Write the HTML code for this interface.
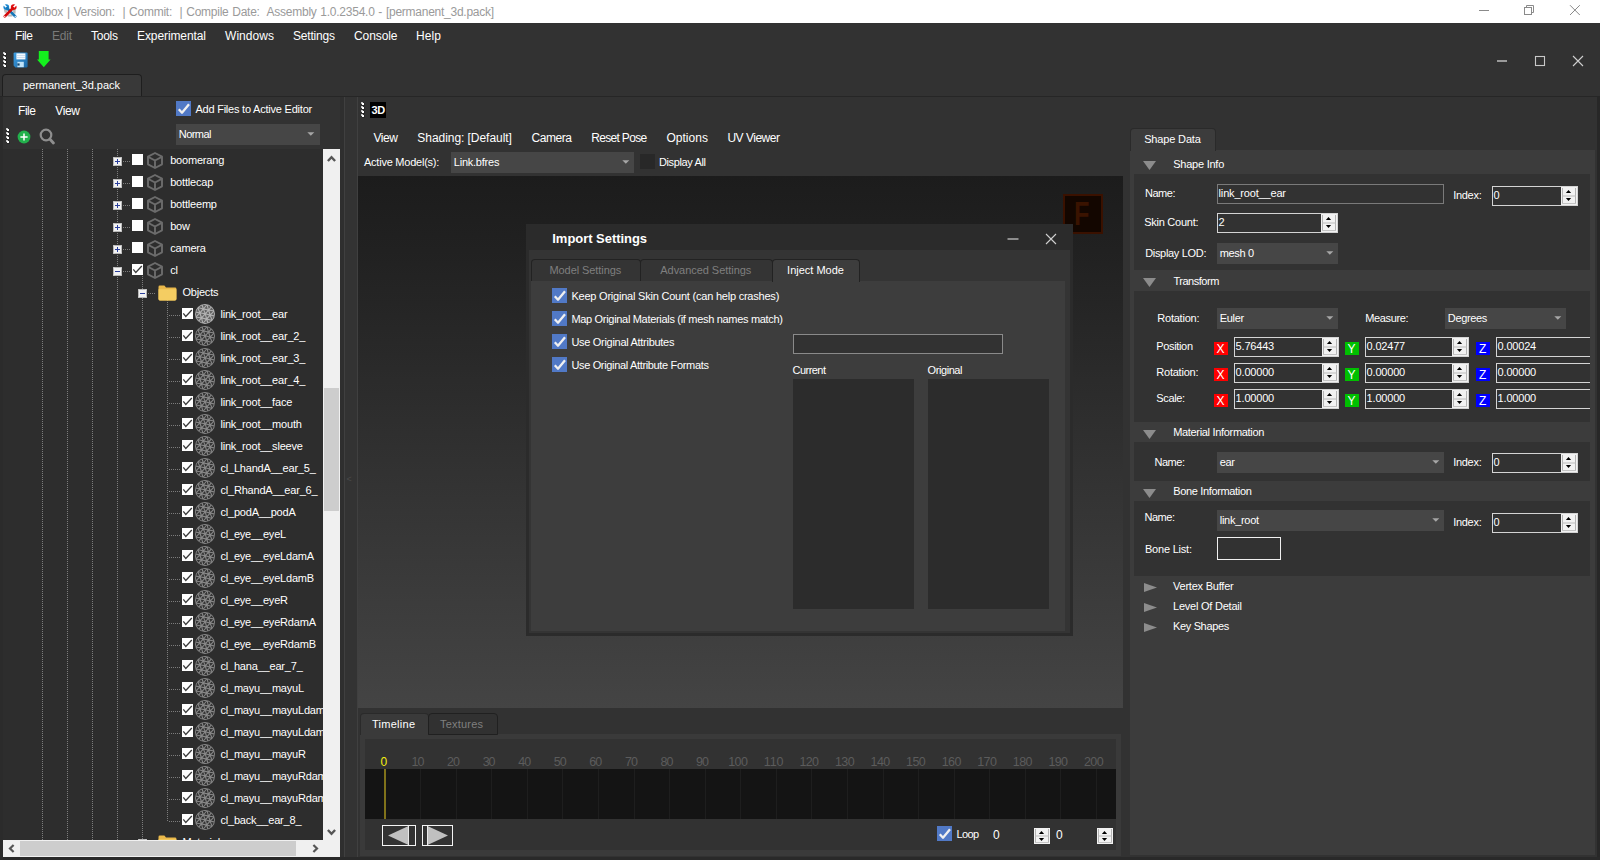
<!DOCTYPE html>
<html lang="en"><head><meta charset="utf-8"><title>Toolbox</title>
<style>
html,body{margin:0;padding:0;background:#2b2b2b;}
body{width:1600px;height:860px;overflow:hidden;font-family:"Liberation Sans",sans-serif;font-size:11px;color:#fff;}
#app{position:relative;width:1600px;height:860px;overflow:hidden;background:#2b2b2b;}
#app div,#app span.t,#app svg{position:absolute;box-sizing:border-box;}
.t{white-space:pre;line-height:16px;}

</style></head>
<body>
<div id="app">
<div id="titlebar" style="left:0;top:0;width:0;height:0;">
<div style="left:0px;top:0px;width:1600px;height:23px;background:#ffffff;"></div>
<svg width="16" height="16" viewBox="-1 -1 16 16" style="left:2px;top:3px"><path d="M0.8 5.6 H4.2 V8.8 H1.6 Z M9.8 5.4 H12.6 V9.4 H10.4 Z M4.2 10.4 H9.4 V12.4 H4.8 Z" fill="#b8b8b8"/><circle cx="3.3" cy="3.1" r="2.9" fill="#1b86cf"/><path d="M3.97 2.63 L2.83 3.77 L-1.4 -0.4 L0 -1.6 Z" fill="#ffffff"/><path d="M4.2 4.2 L12.2 12.4" stroke="#1577b8" stroke-width="2.7" stroke-linecap="round"/><circle cx="12.3" cy="12.4" r="0.7" fill="#d8ecf8"/><circle cx="10.7" cy="3.1" r="2.9" fill="#e01010"/><path d="M10.03 2.63 L11.17 3.77 L15.4 -0.4 L14 -1.6 Z" fill="#ffffff"/><path d="M9.8 4.2 L1.8 12.4" stroke="#d40a0a" stroke-width="2.7" stroke-linecap="round"/><circle cx="1.7" cy="12.4" r="0.7" fill="#f8d8d8"/></svg>
<svg width="120" height="23" viewBox="0 0 120 23" style="left:1475px;top:0px"><path d="M4 10.5 H14" stroke="#8a8a8a" stroke-width="1"/><rect x="49.5" y="7.5" width="7" height="7" fill="none" stroke="#8a8a8a"/><path d="M51.5 7.5 V5.5 H58.5 V12.5 H56.5" fill="none" stroke="#8a8a8a"/><path d="M95 5.2 L104.8 15 M104.8 5.2 L95 15" stroke="#8a8a8a" stroke-width="1"/></svg>
<span class="t" style="left:23.50px;top:3.64px;font-size:12px;color:#9a9a9a;letter-spacing:-0.252px;word-spacing:0.703px;">Toolbox | Version:  | Commit:  | Compile Date:  Assembly 1.0.2354.0 - [permanent_3d.pack]</span>
</div>
<div id="menubar" style="left:0;top:0;width:0;height:0;">
<div style="left:0px;top:23px;width:1600px;height:73px;background:#323232;"></div>
<div style="left:4px;top:53px;width:3px;height:3px;background:#272727;"></div>
<div style="left:3px;top:52px;width:2px;height:2px;background:#c4c4c4;"></div>
<div style="left:4px;top:53px;width:2px;height:2px;background:#ffffff;"></div>
<div style="left:4px;top:57px;width:3px;height:3px;background:#272727;"></div>
<div style="left:3px;top:56px;width:2px;height:2px;background:#c4c4c4;"></div>
<div style="left:4px;top:57px;width:2px;height:2px;background:#ffffff;"></div>
<div style="left:4px;top:61px;width:3px;height:3px;background:#272727;"></div>
<div style="left:3px;top:60px;width:2px;height:2px;background:#c4c4c4;"></div>
<div style="left:4px;top:61px;width:2px;height:2px;background:#ffffff;"></div>
<div style="left:4px;top:65px;width:3px;height:3px;background:#272727;"></div>
<div style="left:3px;top:64px;width:2px;height:2px;background:#c4c4c4;"></div>
<div style="left:4px;top:65px;width:2px;height:2px;background:#ffffff;"></div>
<svg width="15" height="16" viewBox="0 0 15 16" style="left:12.5px;top:51.5px"><defs><linearGradient id="sv" x1="0" y1="0" x2="1" y2="1"><stop offset="0" stop-color="#3f9fe2"/><stop offset="1" stop-color="#1a66a4"/></linearGradient></defs><path d="M0.6 1.4 Q0.6 0.4 1.6 0.4 H13.6 Q14.6 0.4 14.6 1.4 V14.6 Q14.6 15.4 13.6 15.4 H2.4 L0.6 13.6 Z" fill="url(#sv)"/><rect x="3.4" y="1.4" width="9" height="6" fill="#f4f9fd"/><rect x="3.8" y="3.2" width="8.2" height="0.8" fill="#c4d8ea"/><rect x="3.8" y="5" width="8.2" height="0.8" fill="#c4d8ea"/><rect x="4.4" y="9.8" width="6.4" height="5.4" fill="#bfe2f8"/><rect x="4.4" y="11.4" width="2.2" height="2.2" fill="#14466e"/></svg>
<svg width="14" height="17" viewBox="0 0 14 17" style="left:37px;top:51px"><path d="M1.8 0 H11.6 V8.6 H13.6 L6.8 16.3 L0 8.6 H1.8 Z" fill="#14f01e"/></svg>
<svg width="100" height="20" viewBox="0 0 100 20" style="left:1492px;top:51px"><path d="M5 10 H15" stroke="#9a9a9a" stroke-width="2"/><rect x="43.5" y="5.5" width="9" height="9" fill="none" stroke="#c8c8c8" stroke-width="1.1"/><path d="M81 5 L91 15 M91 5 L81 15" stroke="#d0d0d0" stroke-width="1.1"/></svg>
<div style="left:2px;top:74px;width:140px;height:23px;background:#393939;border:1px solid #1e1e1e;border-bottom:none;border-radius:4px 4px 0 0;"></div>
<div style="left:0px;top:96px;width:1600px;height:1px;background:#262626;"></div>
<span class="t" style="left:15.00px;top:27.84px;font-size:12px;color:#fff;letter-spacing:-0.445px;">File</span>
<span class="t" style="left:52.00px;top:27.84px;font-size:12px;color:#7a7a7a;letter-spacing:-0.226px;">Edit</span>
<span class="t" style="left:91.00px;top:27.84px;font-size:12px;color:#fff;letter-spacing:-0.253px;">Tools</span>
<span class="t" style="left:137.00px;top:27.84px;font-size:12px;color:#fff;letter-spacing:-0.094px;">Experimental</span>
<span class="t" style="left:225.00px;top:27.84px;font-size:12px;color:#fff;letter-spacing:0.053px;">Windows</span>
<span class="t" style="left:293.00px;top:27.84px;font-size:12px;color:#fff;letter-spacing:-0.194px;">Settings</span>
<span class="t" style="left:354.00px;top:27.84px;font-size:12px;color:#fff;letter-spacing:-0.088px;">Console</span>
<span class="t" style="left:416.00px;top:27.84px;font-size:12px;color:#fff;letter-spacing:0.107px;">Help</span>
<span class="t" style="left:23.00px;top:77.19px;font-size:11px;color:#fff;letter-spacing:-0.015px;">permanent_3d.pack</span>
</div>
<div id="left-panel" style="left:0;top:0;width:0;height:0;">
<div style="left:3px;top:97px;width:341px;height:760px;background:#323232;"></div>
<div style="left:176px;top:101px;width:15px;height:15px;background:#5179c6;"><svg width="15" height="15" viewBox="0 0 15 15" style="left:0;top:0"><path d="M2.8 8.3 L6 11.7 L13 3.3" fill="none" stroke="#f0f0f0" stroke-width="2.3" stroke-linejoin="round"/></svg></div>
<div style="left:176px;top:124px;width:144px;height:21px;background:#464646;"></div>
<svg width="8" height="4" viewBox="0 0 8 4" style="left:307px;top:132px"><path d="M0.3 0.2 H7.3 L3.8 3.7 Z" fill="#a6a6a6"/></svg>
<div style="left:7px;top:129px;width:3px;height:3px;background:#272727;"></div>
<div style="left:6px;top:128px;width:2px;height:2px;background:#c4c4c4;"></div>
<div style="left:7px;top:129px;width:2px;height:2px;background:#ffffff;"></div>
<div style="left:7px;top:133px;width:3px;height:3px;background:#272727;"></div>
<div style="left:6px;top:132px;width:2px;height:2px;background:#c4c4c4;"></div>
<div style="left:7px;top:133px;width:2px;height:2px;background:#ffffff;"></div>
<div style="left:7px;top:137px;width:3px;height:3px;background:#272727;"></div>
<div style="left:6px;top:136px;width:2px;height:2px;background:#c4c4c4;"></div>
<div style="left:7px;top:137px;width:2px;height:2px;background:#ffffff;"></div>
<div style="left:7px;top:141px;width:3px;height:3px;background:#272727;"></div>
<div style="left:6px;top:140px;width:2px;height:2px;background:#c4c4c4;"></div>
<div style="left:7px;top:141px;width:2px;height:2px;background:#ffffff;"></div>
<svg width="14" height="14" viewBox="0 0 14 14" style="left:17px;top:129.5px"><circle cx="7" cy="7" r="6.4" fill="#22b14c"/><path d="M7 3.4 V10.6 M3.4 7 H10.6" stroke="#fff" stroke-width="1.5"/></svg>
<svg width="16" height="17" viewBox="0 0 16 17" style="left:38.5px;top:127.5px"><circle cx="7" cy="7" r="5.3" fill="none" stroke="#8e8e8e" stroke-width="2.2"/><path d="M11 11.2 L14.4 15" stroke="#8e8e8e" stroke-width="2.8" stroke-linecap="round"/></svg>
<div style="left:3px;top:149px;width:320px;height:691px;background:#2d2d2d;overflow:hidden;"><div style="left:39px;top:0px;width:1px;height:691px;background:repeating-linear-gradient(to bottom,#7d7d7d 0,#7d7d7d 1px,transparent 1px,transparent 2px);"></div><div style="left:64px;top:0px;width:1px;height:691px;background:repeating-linear-gradient(to bottom,#7d7d7d 0,#7d7d7d 1px,transparent 1px,transparent 2px);"></div><div style="left:89px;top:0px;width:1px;height:691px;background:repeating-linear-gradient(to bottom,#7d7d7d 0,#7d7d7d 1px,transparent 1px,transparent 2px);"></div><div style="left:114px;top:0px;width:1px;height:691px;background:repeating-linear-gradient(to bottom,#7d7d7d 0,#7d7d7d 1px,transparent 1px,transparent 2px);"></div><div style="left:139px;top:127px;width:1px;height:564px;background:repeating-linear-gradient(to bottom,#7d7d7d 0,#7d7d7d 1px,transparent 1px,transparent 2px);"></div><div style="left:164px;top:149px;width:1px;height:523px;background:repeating-linear-gradient(to bottom,#7d7d7d 0,#7d7d7d 1px,transparent 1px,transparent 2px);"></div><div style="left:120px;top:12px;width:8px;height:1px;background:repeating-linear-gradient(to right,#7d7d7d 0,#7d7d7d 1px,transparent 1px,transparent 2px);"></div><svg width="9" height="9" viewBox="0 0 9 9" style="left:110px;top:8px"><rect x="0" y="0" width="9" height="9" rx="1" fill="#f2f2f2"/><rect x="0.5" y="0.5" width="8" height="8" rx="1" fill="none" stroke="#b8b8b8"/><path d="M2 4.5 H7" stroke="#2b3f9c" stroke-width="1"/><path d="M4.5 2 V7" stroke="#2b3f9c" stroke-width="1"/></svg><div style="left:129px;top:5px;width:11px;height:11px;background:#ffffff;"></div><svg width="16" height="17" viewBox="0 0 16 17" style="left:144px;top:3px"><path d="M8 1 L15 4.7 V12.3 L8 16 L1 12.3 V4.7 Z" fill="none" stroke="#6c6c6c" stroke-width="1.9" stroke-linejoin="round"/><path d="M1.2 4.9 L8 8.5 L14.8 4.9 M8 8.5 V15.8" fill="none" stroke="#6c6c6c" stroke-width="1.9"/></svg><div style="left:120px;top:34px;width:8px;height:1px;background:repeating-linear-gradient(to right,#7d7d7d 0,#7d7d7d 1px,transparent 1px,transparent 2px);"></div><svg width="9" height="9" viewBox="0 0 9 9" style="left:110px;top:30px"><rect x="0" y="0" width="9" height="9" rx="1" fill="#f2f2f2"/><rect x="0.5" y="0.5" width="8" height="8" rx="1" fill="none" stroke="#b8b8b8"/><path d="M2 4.5 H7" stroke="#2b3f9c" stroke-width="1"/><path d="M4.5 2 V7" stroke="#2b3f9c" stroke-width="1"/></svg><div style="left:129px;top:27px;width:11px;height:11px;background:#ffffff;"></div><svg width="16" height="17" viewBox="0 0 16 17" style="left:144px;top:25px"><path d="M8 1 L15 4.7 V12.3 L8 16 L1 12.3 V4.7 Z" fill="none" stroke="#6c6c6c" stroke-width="1.9" stroke-linejoin="round"/><path d="M1.2 4.9 L8 8.5 L14.8 4.9 M8 8.5 V15.8" fill="none" stroke="#6c6c6c" stroke-width="1.9"/></svg><div style="left:120px;top:56px;width:8px;height:1px;background:repeating-linear-gradient(to right,#7d7d7d 0,#7d7d7d 1px,transparent 1px,transparent 2px);"></div><svg width="9" height="9" viewBox="0 0 9 9" style="left:110px;top:52px"><rect x="0" y="0" width="9" height="9" rx="1" fill="#f2f2f2"/><rect x="0.5" y="0.5" width="8" height="8" rx="1" fill="none" stroke="#b8b8b8"/><path d="M2 4.5 H7" stroke="#2b3f9c" stroke-width="1"/><path d="M4.5 2 V7" stroke="#2b3f9c" stroke-width="1"/></svg><div style="left:129px;top:49px;width:11px;height:11px;background:#ffffff;"></div><svg width="16" height="17" viewBox="0 0 16 17" style="left:144px;top:47px"><path d="M8 1 L15 4.7 V12.3 L8 16 L1 12.3 V4.7 Z" fill="none" stroke="#6c6c6c" stroke-width="1.9" stroke-linejoin="round"/><path d="M1.2 4.9 L8 8.5 L14.8 4.9 M8 8.5 V15.8" fill="none" stroke="#6c6c6c" stroke-width="1.9"/></svg><div style="left:120px;top:78px;width:8px;height:1px;background:repeating-linear-gradient(to right,#7d7d7d 0,#7d7d7d 1px,transparent 1px,transparent 2px);"></div><svg width="9" height="9" viewBox="0 0 9 9" style="left:110px;top:74px"><rect x="0" y="0" width="9" height="9" rx="1" fill="#f2f2f2"/><rect x="0.5" y="0.5" width="8" height="8" rx="1" fill="none" stroke="#b8b8b8"/><path d="M2 4.5 H7" stroke="#2b3f9c" stroke-width="1"/><path d="M4.5 2 V7" stroke="#2b3f9c" stroke-width="1"/></svg><div style="left:129px;top:71px;width:11px;height:11px;background:#ffffff;"></div><svg width="16" height="17" viewBox="0 0 16 17" style="left:144px;top:69px"><path d="M8 1 L15 4.7 V12.3 L8 16 L1 12.3 V4.7 Z" fill="none" stroke="#6c6c6c" stroke-width="1.9" stroke-linejoin="round"/><path d="M1.2 4.9 L8 8.5 L14.8 4.9 M8 8.5 V15.8" fill="none" stroke="#6c6c6c" stroke-width="1.9"/></svg><div style="left:120px;top:100px;width:8px;height:1px;background:repeating-linear-gradient(to right,#7d7d7d 0,#7d7d7d 1px,transparent 1px,transparent 2px);"></div><svg width="9" height="9" viewBox="0 0 9 9" style="left:110px;top:96px"><rect x="0" y="0" width="9" height="9" rx="1" fill="#f2f2f2"/><rect x="0.5" y="0.5" width="8" height="8" rx="1" fill="none" stroke="#b8b8b8"/><path d="M2 4.5 H7" stroke="#2b3f9c" stroke-width="1"/><path d="M4.5 2 V7" stroke="#2b3f9c" stroke-width="1"/></svg><div style="left:129px;top:93px;width:11px;height:11px;background:#ffffff;"></div><svg width="16" height="17" viewBox="0 0 16 17" style="left:144px;top:91px"><path d="M8 1 L15 4.7 V12.3 L8 16 L1 12.3 V4.7 Z" fill="none" stroke="#6c6c6c" stroke-width="1.9" stroke-linejoin="round"/><path d="M1.2 4.9 L8 8.5 L14.8 4.9 M8 8.5 V15.8" fill="none" stroke="#6c6c6c" stroke-width="1.9"/></svg><div style="left:120px;top:122px;width:8px;height:1px;background:repeating-linear-gradient(to right,#7d7d7d 0,#7d7d7d 1px,transparent 1px,transparent 2px);"></div><svg width="9" height="9" viewBox="0 0 9 9" style="left:110px;top:118px"><rect x="0" y="0" width="9" height="9" rx="1" fill="#f2f2f2"/><rect x="0.5" y="0.5" width="8" height="8" rx="1" fill="none" stroke="#b8b8b8"/><path d="M2 4.5 H7" stroke="#2b3f9c" stroke-width="1"/></svg><div style="left:129px;top:115px;width:11px;height:11px;background:#ffffff;"><svg width="11" height="11" viewBox="0 0 11 11" style="left:0;top:0"><path d="M1.3 5.4 L3.8 8.4 L9.8 2" fill="none" stroke="#3a3a3a" stroke-width="1.3"/></svg></div><svg width="16" height="17" viewBox="0 0 16 17" style="left:144px;top:113px"><path d="M8 1 L15 4.7 V12.3 L8 16 L1 12.3 V4.7 Z" fill="none" stroke="#6c6c6c" stroke-width="1.9" stroke-linejoin="round"/><path d="M1.2 4.9 L8 8.5 L14.8 4.9 M8 8.5 V15.8" fill="none" stroke="#6c6c6c" stroke-width="1.9"/></svg><div style="left:145px;top:144px;width:8px;height:1px;background:repeating-linear-gradient(to right,#7d7d7d 0,#7d7d7d 1px,transparent 1px,transparent 2px);"></div><svg width="9" height="9" viewBox="0 0 9 9" style="left:135px;top:140px"><rect x="0" y="0" width="9" height="9" rx="1" fill="#f2f2f2"/><rect x="0.5" y="0.5" width="8" height="8" rx="1" fill="none" stroke="#b8b8b8"/><path d="M2 4.5 H7" stroke="#2b3f9c" stroke-width="1"/></svg><svg width="19" height="16" viewBox="0 0 19 16" style="left:155px;top:135.5px"><path d="M0.5 2 Q0.5 0.6 1.8 0.6 H6.4 L8 2.4 H17 Q18.4 2.4 18.4 3.8 V14 Q18.4 15.4 17 15.4 H1.9 Q0.5 15.4 0.5 14 Z" fill="#e9b84a"/><path d="M0.5 4.2 H18.4 V14 Q18.4 15.4 17 15.4 H1.9 Q0.5 15.4 0.5 14 Z" fill="#f4cd62"/></svg><div style="left:166px;top:166px;width:12px;height:1px;background:repeating-linear-gradient(to right,#7d7d7d 0,#7d7d7d 1px,transparent 1px,transparent 2px);"></div><div style="left:179px;top:159px;width:11px;height:11px;background:#ffffff;"><svg width="11" height="11" viewBox="0 0 11 11" style="left:0;top:0"><path d="M1.3 5.4 L3.8 8.4 L9.8 2" fill="none" stroke="#3a3a3a" stroke-width="1.3"/></svg></div><svg width="20" height="20" viewBox="0 0 20 20" style="left:192px;top:155px"><circle cx="10" cy="10" r="10" fill="#b2b2b2"/><path d="M11.03 10.57 L14.09 11.39 L11.87 13.86 Z M15.91 11.86 L18.85 12.49 L17.36 15.41 Z M14.94 12.21 L12.71 14.68 L16.39 15.76 Z M12.47 15.68 L16.15 16.76 L13.40 18.54 Z M10.00 10.91 L10.84 14.20 L7.58 13.51 Z M11.34 16.05 L12.27 18.91 L9.00 19.08 Z M10.56 15.38 L7.30 14.69 L8.21 18.42 Z M6.31 14.98 L7.22 18.71 L4.30 17.22 Z M9.20 10.18 L6.78 12.78 L5.75 9.62 Z M5.43 14.19 L3.42 16.42 L1.63 13.67 Z M5.62 13.17 L4.59 10.01 L1.82 12.66 Z M3.84 9.30 L1.07 11.95 L0.90 8.67 Z M9.42 9.12 L5.98 8.56 L8.20 6.09 Z M4.09 8.14 L1.15 7.51 L2.64 4.59 Z M5.06 7.79 L7.29 5.32 L3.61 4.24 Z M7.53 4.32 L3.85 3.24 L6.60 1.46 Z M10.45 8.79 L9.23 5.75 L12.49 6.45 Z M8.66 3.95 L7.73 1.09 L11.00 0.92 Z M9.44 4.62 L12.70 5.31 L11.79 1.58 Z M13.69 5.02 L12.78 1.29 L15.70 2.78 Z M11.26 9.51 L13.29 7.17 L14.32 10.33 Z M14.57 5.81 L16.58 3.58 L18.37 6.33 Z M14.38 6.83 L15.41 9.99 L18.18 7.34 Z M16.16 10.70 L18.93 8.05 L19.10 11.33 Z" fill="#2d2d2d" opacity="0.6"/></svg><div style="left:166px;top:188px;width:12px;height:1px;background:repeating-linear-gradient(to right,#7d7d7d 0,#7d7d7d 1px,transparent 1px,transparent 2px);"></div><div style="left:179px;top:181px;width:11px;height:11px;background:#ffffff;"><svg width="11" height="11" viewBox="0 0 11 11" style="left:0;top:0"><path d="M1.3 5.4 L3.8 8.4 L9.8 2" fill="none" stroke="#3a3a3a" stroke-width="1.3"/></svg></div><svg width="20" height="20" viewBox="0 0 20 20" style="left:192px;top:177px"><circle cx="10" cy="10" r="10" fill="#888888"/><path d="M11.03 10.57 L14.09 11.39 L11.87 13.86 Z M15.91 11.86 L18.85 12.49 L17.36 15.41 Z M14.94 12.21 L12.71 14.68 L16.39 15.76 Z M12.47 15.68 L16.15 16.76 L13.40 18.54 Z M10.00 10.91 L10.84 14.20 L7.58 13.51 Z M11.34 16.05 L12.27 18.91 L9.00 19.08 Z M10.56 15.38 L7.30 14.69 L8.21 18.42 Z M6.31 14.98 L7.22 18.71 L4.30 17.22 Z M9.20 10.18 L6.78 12.78 L5.75 9.62 Z M5.43 14.19 L3.42 16.42 L1.63 13.67 Z M5.62 13.17 L4.59 10.01 L1.82 12.66 Z M3.84 9.30 L1.07 11.95 L0.90 8.67 Z M9.42 9.12 L5.98 8.56 L8.20 6.09 Z M4.09 8.14 L1.15 7.51 L2.64 4.59 Z M5.06 7.79 L7.29 5.32 L3.61 4.24 Z M7.53 4.32 L3.85 3.24 L6.60 1.46 Z M10.45 8.79 L9.23 5.75 L12.49 6.45 Z M8.66 3.95 L7.73 1.09 L11.00 0.92 Z M9.44 4.62 L12.70 5.31 L11.79 1.58 Z M13.69 5.02 L12.78 1.29 L15.70 2.78 Z M11.26 9.51 L13.29 7.17 L14.32 10.33 Z M14.57 5.81 L16.58 3.58 L18.37 6.33 Z M14.38 6.83 L15.41 9.99 L18.18 7.34 Z M16.16 10.70 L18.93 8.05 L19.10 11.33 Z" fill="#2d2d2d" opacity="0.92"/></svg><div style="left:166px;top:210px;width:12px;height:1px;background:repeating-linear-gradient(to right,#7d7d7d 0,#7d7d7d 1px,transparent 1px,transparent 2px);"></div><div style="left:179px;top:203px;width:11px;height:11px;background:#ffffff;"><svg width="11" height="11" viewBox="0 0 11 11" style="left:0;top:0"><path d="M1.3 5.4 L3.8 8.4 L9.8 2" fill="none" stroke="#3a3a3a" stroke-width="1.3"/></svg></div><svg width="20" height="20" viewBox="0 0 20 20" style="left:192px;top:199px"><circle cx="10" cy="10" r="10" fill="#888888"/><path d="M11.03 10.57 L14.09 11.39 L11.87 13.86 Z M15.91 11.86 L18.85 12.49 L17.36 15.41 Z M14.94 12.21 L12.71 14.68 L16.39 15.76 Z M12.47 15.68 L16.15 16.76 L13.40 18.54 Z M10.00 10.91 L10.84 14.20 L7.58 13.51 Z M11.34 16.05 L12.27 18.91 L9.00 19.08 Z M10.56 15.38 L7.30 14.69 L8.21 18.42 Z M6.31 14.98 L7.22 18.71 L4.30 17.22 Z M9.20 10.18 L6.78 12.78 L5.75 9.62 Z M5.43 14.19 L3.42 16.42 L1.63 13.67 Z M5.62 13.17 L4.59 10.01 L1.82 12.66 Z M3.84 9.30 L1.07 11.95 L0.90 8.67 Z M9.42 9.12 L5.98 8.56 L8.20 6.09 Z M4.09 8.14 L1.15 7.51 L2.64 4.59 Z M5.06 7.79 L7.29 5.32 L3.61 4.24 Z M7.53 4.32 L3.85 3.24 L6.60 1.46 Z M10.45 8.79 L9.23 5.75 L12.49 6.45 Z M8.66 3.95 L7.73 1.09 L11.00 0.92 Z M9.44 4.62 L12.70 5.31 L11.79 1.58 Z M13.69 5.02 L12.78 1.29 L15.70 2.78 Z M11.26 9.51 L13.29 7.17 L14.32 10.33 Z M14.57 5.81 L16.58 3.58 L18.37 6.33 Z M14.38 6.83 L15.41 9.99 L18.18 7.34 Z M16.16 10.70 L18.93 8.05 L19.10 11.33 Z" fill="#2d2d2d" opacity="0.92"/></svg><div style="left:166px;top:232px;width:12px;height:1px;background:repeating-linear-gradient(to right,#7d7d7d 0,#7d7d7d 1px,transparent 1px,transparent 2px);"></div><div style="left:179px;top:225px;width:11px;height:11px;background:#ffffff;"><svg width="11" height="11" viewBox="0 0 11 11" style="left:0;top:0"><path d="M1.3 5.4 L3.8 8.4 L9.8 2" fill="none" stroke="#3a3a3a" stroke-width="1.3"/></svg></div><svg width="20" height="20" viewBox="0 0 20 20" style="left:192px;top:221px"><circle cx="10" cy="10" r="10" fill="#888888"/><path d="M11.03 10.57 L14.09 11.39 L11.87 13.86 Z M15.91 11.86 L18.85 12.49 L17.36 15.41 Z M14.94 12.21 L12.71 14.68 L16.39 15.76 Z M12.47 15.68 L16.15 16.76 L13.40 18.54 Z M10.00 10.91 L10.84 14.20 L7.58 13.51 Z M11.34 16.05 L12.27 18.91 L9.00 19.08 Z M10.56 15.38 L7.30 14.69 L8.21 18.42 Z M6.31 14.98 L7.22 18.71 L4.30 17.22 Z M9.20 10.18 L6.78 12.78 L5.75 9.62 Z M5.43 14.19 L3.42 16.42 L1.63 13.67 Z M5.62 13.17 L4.59 10.01 L1.82 12.66 Z M3.84 9.30 L1.07 11.95 L0.90 8.67 Z M9.42 9.12 L5.98 8.56 L8.20 6.09 Z M4.09 8.14 L1.15 7.51 L2.64 4.59 Z M5.06 7.79 L7.29 5.32 L3.61 4.24 Z M7.53 4.32 L3.85 3.24 L6.60 1.46 Z M10.45 8.79 L9.23 5.75 L12.49 6.45 Z M8.66 3.95 L7.73 1.09 L11.00 0.92 Z M9.44 4.62 L12.70 5.31 L11.79 1.58 Z M13.69 5.02 L12.78 1.29 L15.70 2.78 Z M11.26 9.51 L13.29 7.17 L14.32 10.33 Z M14.57 5.81 L16.58 3.58 L18.37 6.33 Z M14.38 6.83 L15.41 9.99 L18.18 7.34 Z M16.16 10.70 L18.93 8.05 L19.10 11.33 Z" fill="#2d2d2d" opacity="0.92"/></svg><div style="left:166px;top:254px;width:12px;height:1px;background:repeating-linear-gradient(to right,#7d7d7d 0,#7d7d7d 1px,transparent 1px,transparent 2px);"></div><div style="left:179px;top:247px;width:11px;height:11px;background:#ffffff;"><svg width="11" height="11" viewBox="0 0 11 11" style="left:0;top:0"><path d="M1.3 5.4 L3.8 8.4 L9.8 2" fill="none" stroke="#3a3a3a" stroke-width="1.3"/></svg></div><svg width="20" height="20" viewBox="0 0 20 20" style="left:192px;top:243px"><circle cx="10" cy="10" r="10" fill="#888888"/><path d="M11.03 10.57 L14.09 11.39 L11.87 13.86 Z M15.91 11.86 L18.85 12.49 L17.36 15.41 Z M14.94 12.21 L12.71 14.68 L16.39 15.76 Z M12.47 15.68 L16.15 16.76 L13.40 18.54 Z M10.00 10.91 L10.84 14.20 L7.58 13.51 Z M11.34 16.05 L12.27 18.91 L9.00 19.08 Z M10.56 15.38 L7.30 14.69 L8.21 18.42 Z M6.31 14.98 L7.22 18.71 L4.30 17.22 Z M9.20 10.18 L6.78 12.78 L5.75 9.62 Z M5.43 14.19 L3.42 16.42 L1.63 13.67 Z M5.62 13.17 L4.59 10.01 L1.82 12.66 Z M3.84 9.30 L1.07 11.95 L0.90 8.67 Z M9.42 9.12 L5.98 8.56 L8.20 6.09 Z M4.09 8.14 L1.15 7.51 L2.64 4.59 Z M5.06 7.79 L7.29 5.32 L3.61 4.24 Z M7.53 4.32 L3.85 3.24 L6.60 1.46 Z M10.45 8.79 L9.23 5.75 L12.49 6.45 Z M8.66 3.95 L7.73 1.09 L11.00 0.92 Z M9.44 4.62 L12.70 5.31 L11.79 1.58 Z M13.69 5.02 L12.78 1.29 L15.70 2.78 Z M11.26 9.51 L13.29 7.17 L14.32 10.33 Z M14.57 5.81 L16.58 3.58 L18.37 6.33 Z M14.38 6.83 L15.41 9.99 L18.18 7.34 Z M16.16 10.70 L18.93 8.05 L19.10 11.33 Z" fill="#2d2d2d" opacity="0.92"/></svg><div style="left:166px;top:276px;width:12px;height:1px;background:repeating-linear-gradient(to right,#7d7d7d 0,#7d7d7d 1px,transparent 1px,transparent 2px);"></div><div style="left:179px;top:269px;width:11px;height:11px;background:#ffffff;"><svg width="11" height="11" viewBox="0 0 11 11" style="left:0;top:0"><path d="M1.3 5.4 L3.8 8.4 L9.8 2" fill="none" stroke="#3a3a3a" stroke-width="1.3"/></svg></div><svg width="20" height="20" viewBox="0 0 20 20" style="left:192px;top:265px"><circle cx="10" cy="10" r="10" fill="#888888"/><path d="M11.03 10.57 L14.09 11.39 L11.87 13.86 Z M15.91 11.86 L18.85 12.49 L17.36 15.41 Z M14.94 12.21 L12.71 14.68 L16.39 15.76 Z M12.47 15.68 L16.15 16.76 L13.40 18.54 Z M10.00 10.91 L10.84 14.20 L7.58 13.51 Z M11.34 16.05 L12.27 18.91 L9.00 19.08 Z M10.56 15.38 L7.30 14.69 L8.21 18.42 Z M6.31 14.98 L7.22 18.71 L4.30 17.22 Z M9.20 10.18 L6.78 12.78 L5.75 9.62 Z M5.43 14.19 L3.42 16.42 L1.63 13.67 Z M5.62 13.17 L4.59 10.01 L1.82 12.66 Z M3.84 9.30 L1.07 11.95 L0.90 8.67 Z M9.42 9.12 L5.98 8.56 L8.20 6.09 Z M4.09 8.14 L1.15 7.51 L2.64 4.59 Z M5.06 7.79 L7.29 5.32 L3.61 4.24 Z M7.53 4.32 L3.85 3.24 L6.60 1.46 Z M10.45 8.79 L9.23 5.75 L12.49 6.45 Z M8.66 3.95 L7.73 1.09 L11.00 0.92 Z M9.44 4.62 L12.70 5.31 L11.79 1.58 Z M13.69 5.02 L12.78 1.29 L15.70 2.78 Z M11.26 9.51 L13.29 7.17 L14.32 10.33 Z M14.57 5.81 L16.58 3.58 L18.37 6.33 Z M14.38 6.83 L15.41 9.99 L18.18 7.34 Z M16.16 10.70 L18.93 8.05 L19.10 11.33 Z" fill="#2d2d2d" opacity="0.92"/></svg><div style="left:166px;top:298px;width:12px;height:1px;background:repeating-linear-gradient(to right,#7d7d7d 0,#7d7d7d 1px,transparent 1px,transparent 2px);"></div><div style="left:179px;top:291px;width:11px;height:11px;background:#ffffff;"><svg width="11" height="11" viewBox="0 0 11 11" style="left:0;top:0"><path d="M1.3 5.4 L3.8 8.4 L9.8 2" fill="none" stroke="#3a3a3a" stroke-width="1.3"/></svg></div><svg width="20" height="20" viewBox="0 0 20 20" style="left:192px;top:287px"><circle cx="10" cy="10" r="10" fill="#888888"/><path d="M11.03 10.57 L14.09 11.39 L11.87 13.86 Z M15.91 11.86 L18.85 12.49 L17.36 15.41 Z M14.94 12.21 L12.71 14.68 L16.39 15.76 Z M12.47 15.68 L16.15 16.76 L13.40 18.54 Z M10.00 10.91 L10.84 14.20 L7.58 13.51 Z M11.34 16.05 L12.27 18.91 L9.00 19.08 Z M10.56 15.38 L7.30 14.69 L8.21 18.42 Z M6.31 14.98 L7.22 18.71 L4.30 17.22 Z M9.20 10.18 L6.78 12.78 L5.75 9.62 Z M5.43 14.19 L3.42 16.42 L1.63 13.67 Z M5.62 13.17 L4.59 10.01 L1.82 12.66 Z M3.84 9.30 L1.07 11.95 L0.90 8.67 Z M9.42 9.12 L5.98 8.56 L8.20 6.09 Z M4.09 8.14 L1.15 7.51 L2.64 4.59 Z M5.06 7.79 L7.29 5.32 L3.61 4.24 Z M7.53 4.32 L3.85 3.24 L6.60 1.46 Z M10.45 8.79 L9.23 5.75 L12.49 6.45 Z M8.66 3.95 L7.73 1.09 L11.00 0.92 Z M9.44 4.62 L12.70 5.31 L11.79 1.58 Z M13.69 5.02 L12.78 1.29 L15.70 2.78 Z M11.26 9.51 L13.29 7.17 L14.32 10.33 Z M14.57 5.81 L16.58 3.58 L18.37 6.33 Z M14.38 6.83 L15.41 9.99 L18.18 7.34 Z M16.16 10.70 L18.93 8.05 L19.10 11.33 Z" fill="#2d2d2d" opacity="0.92"/></svg><div style="left:166px;top:320px;width:12px;height:1px;background:repeating-linear-gradient(to right,#7d7d7d 0,#7d7d7d 1px,transparent 1px,transparent 2px);"></div><div style="left:179px;top:313px;width:11px;height:11px;background:#ffffff;"><svg width="11" height="11" viewBox="0 0 11 11" style="left:0;top:0"><path d="M1.3 5.4 L3.8 8.4 L9.8 2" fill="none" stroke="#3a3a3a" stroke-width="1.3"/></svg></div><svg width="20" height="20" viewBox="0 0 20 20" style="left:192px;top:309px"><circle cx="10" cy="10" r="10" fill="#888888"/><path d="M11.03 10.57 L14.09 11.39 L11.87 13.86 Z M15.91 11.86 L18.85 12.49 L17.36 15.41 Z M14.94 12.21 L12.71 14.68 L16.39 15.76 Z M12.47 15.68 L16.15 16.76 L13.40 18.54 Z M10.00 10.91 L10.84 14.20 L7.58 13.51 Z M11.34 16.05 L12.27 18.91 L9.00 19.08 Z M10.56 15.38 L7.30 14.69 L8.21 18.42 Z M6.31 14.98 L7.22 18.71 L4.30 17.22 Z M9.20 10.18 L6.78 12.78 L5.75 9.62 Z M5.43 14.19 L3.42 16.42 L1.63 13.67 Z M5.62 13.17 L4.59 10.01 L1.82 12.66 Z M3.84 9.30 L1.07 11.95 L0.90 8.67 Z M9.42 9.12 L5.98 8.56 L8.20 6.09 Z M4.09 8.14 L1.15 7.51 L2.64 4.59 Z M5.06 7.79 L7.29 5.32 L3.61 4.24 Z M7.53 4.32 L3.85 3.24 L6.60 1.46 Z M10.45 8.79 L9.23 5.75 L12.49 6.45 Z M8.66 3.95 L7.73 1.09 L11.00 0.92 Z M9.44 4.62 L12.70 5.31 L11.79 1.58 Z M13.69 5.02 L12.78 1.29 L15.70 2.78 Z M11.26 9.51 L13.29 7.17 L14.32 10.33 Z M14.57 5.81 L16.58 3.58 L18.37 6.33 Z M14.38 6.83 L15.41 9.99 L18.18 7.34 Z M16.16 10.70 L18.93 8.05 L19.10 11.33 Z" fill="#2d2d2d" opacity="0.92"/></svg><div style="left:166px;top:342px;width:12px;height:1px;background:repeating-linear-gradient(to right,#7d7d7d 0,#7d7d7d 1px,transparent 1px,transparent 2px);"></div><div style="left:179px;top:335px;width:11px;height:11px;background:#ffffff;"><svg width="11" height="11" viewBox="0 0 11 11" style="left:0;top:0"><path d="M1.3 5.4 L3.8 8.4 L9.8 2" fill="none" stroke="#3a3a3a" stroke-width="1.3"/></svg></div><svg width="20" height="20" viewBox="0 0 20 20" style="left:192px;top:331px"><circle cx="10" cy="10" r="10" fill="#888888"/><path d="M11.03 10.57 L14.09 11.39 L11.87 13.86 Z M15.91 11.86 L18.85 12.49 L17.36 15.41 Z M14.94 12.21 L12.71 14.68 L16.39 15.76 Z M12.47 15.68 L16.15 16.76 L13.40 18.54 Z M10.00 10.91 L10.84 14.20 L7.58 13.51 Z M11.34 16.05 L12.27 18.91 L9.00 19.08 Z M10.56 15.38 L7.30 14.69 L8.21 18.42 Z M6.31 14.98 L7.22 18.71 L4.30 17.22 Z M9.20 10.18 L6.78 12.78 L5.75 9.62 Z M5.43 14.19 L3.42 16.42 L1.63 13.67 Z M5.62 13.17 L4.59 10.01 L1.82 12.66 Z M3.84 9.30 L1.07 11.95 L0.90 8.67 Z M9.42 9.12 L5.98 8.56 L8.20 6.09 Z M4.09 8.14 L1.15 7.51 L2.64 4.59 Z M5.06 7.79 L7.29 5.32 L3.61 4.24 Z M7.53 4.32 L3.85 3.24 L6.60 1.46 Z M10.45 8.79 L9.23 5.75 L12.49 6.45 Z M8.66 3.95 L7.73 1.09 L11.00 0.92 Z M9.44 4.62 L12.70 5.31 L11.79 1.58 Z M13.69 5.02 L12.78 1.29 L15.70 2.78 Z M11.26 9.51 L13.29 7.17 L14.32 10.33 Z M14.57 5.81 L16.58 3.58 L18.37 6.33 Z M14.38 6.83 L15.41 9.99 L18.18 7.34 Z M16.16 10.70 L18.93 8.05 L19.10 11.33 Z" fill="#2d2d2d" opacity="0.92"/></svg><div style="left:166px;top:364px;width:12px;height:1px;background:repeating-linear-gradient(to right,#7d7d7d 0,#7d7d7d 1px,transparent 1px,transparent 2px);"></div><div style="left:179px;top:357px;width:11px;height:11px;background:#ffffff;"><svg width="11" height="11" viewBox="0 0 11 11" style="left:0;top:0"><path d="M1.3 5.4 L3.8 8.4 L9.8 2" fill="none" stroke="#3a3a3a" stroke-width="1.3"/></svg></div><svg width="20" height="20" viewBox="0 0 20 20" style="left:192px;top:353px"><circle cx="10" cy="10" r="10" fill="#888888"/><path d="M11.03 10.57 L14.09 11.39 L11.87 13.86 Z M15.91 11.86 L18.85 12.49 L17.36 15.41 Z M14.94 12.21 L12.71 14.68 L16.39 15.76 Z M12.47 15.68 L16.15 16.76 L13.40 18.54 Z M10.00 10.91 L10.84 14.20 L7.58 13.51 Z M11.34 16.05 L12.27 18.91 L9.00 19.08 Z M10.56 15.38 L7.30 14.69 L8.21 18.42 Z M6.31 14.98 L7.22 18.71 L4.30 17.22 Z M9.20 10.18 L6.78 12.78 L5.75 9.62 Z M5.43 14.19 L3.42 16.42 L1.63 13.67 Z M5.62 13.17 L4.59 10.01 L1.82 12.66 Z M3.84 9.30 L1.07 11.95 L0.90 8.67 Z M9.42 9.12 L5.98 8.56 L8.20 6.09 Z M4.09 8.14 L1.15 7.51 L2.64 4.59 Z M5.06 7.79 L7.29 5.32 L3.61 4.24 Z M7.53 4.32 L3.85 3.24 L6.60 1.46 Z M10.45 8.79 L9.23 5.75 L12.49 6.45 Z M8.66 3.95 L7.73 1.09 L11.00 0.92 Z M9.44 4.62 L12.70 5.31 L11.79 1.58 Z M13.69 5.02 L12.78 1.29 L15.70 2.78 Z M11.26 9.51 L13.29 7.17 L14.32 10.33 Z M14.57 5.81 L16.58 3.58 L18.37 6.33 Z M14.38 6.83 L15.41 9.99 L18.18 7.34 Z M16.16 10.70 L18.93 8.05 L19.10 11.33 Z" fill="#2d2d2d" opacity="0.92"/></svg><div style="left:166px;top:386px;width:12px;height:1px;background:repeating-linear-gradient(to right,#7d7d7d 0,#7d7d7d 1px,transparent 1px,transparent 2px);"></div><div style="left:179px;top:379px;width:11px;height:11px;background:#ffffff;"><svg width="11" height="11" viewBox="0 0 11 11" style="left:0;top:0"><path d="M1.3 5.4 L3.8 8.4 L9.8 2" fill="none" stroke="#3a3a3a" stroke-width="1.3"/></svg></div><svg width="20" height="20" viewBox="0 0 20 20" style="left:192px;top:375px"><circle cx="10" cy="10" r="10" fill="#888888"/><path d="M11.03 10.57 L14.09 11.39 L11.87 13.86 Z M15.91 11.86 L18.85 12.49 L17.36 15.41 Z M14.94 12.21 L12.71 14.68 L16.39 15.76 Z M12.47 15.68 L16.15 16.76 L13.40 18.54 Z M10.00 10.91 L10.84 14.20 L7.58 13.51 Z M11.34 16.05 L12.27 18.91 L9.00 19.08 Z M10.56 15.38 L7.30 14.69 L8.21 18.42 Z M6.31 14.98 L7.22 18.71 L4.30 17.22 Z M9.20 10.18 L6.78 12.78 L5.75 9.62 Z M5.43 14.19 L3.42 16.42 L1.63 13.67 Z M5.62 13.17 L4.59 10.01 L1.82 12.66 Z M3.84 9.30 L1.07 11.95 L0.90 8.67 Z M9.42 9.12 L5.98 8.56 L8.20 6.09 Z M4.09 8.14 L1.15 7.51 L2.64 4.59 Z M5.06 7.79 L7.29 5.32 L3.61 4.24 Z M7.53 4.32 L3.85 3.24 L6.60 1.46 Z M10.45 8.79 L9.23 5.75 L12.49 6.45 Z M8.66 3.95 L7.73 1.09 L11.00 0.92 Z M9.44 4.62 L12.70 5.31 L11.79 1.58 Z M13.69 5.02 L12.78 1.29 L15.70 2.78 Z M11.26 9.51 L13.29 7.17 L14.32 10.33 Z M14.57 5.81 L16.58 3.58 L18.37 6.33 Z M14.38 6.83 L15.41 9.99 L18.18 7.34 Z M16.16 10.70 L18.93 8.05 L19.10 11.33 Z" fill="#2d2d2d" opacity="0.92"/></svg><div style="left:166px;top:408px;width:12px;height:1px;background:repeating-linear-gradient(to right,#7d7d7d 0,#7d7d7d 1px,transparent 1px,transparent 2px);"></div><div style="left:179px;top:401px;width:11px;height:11px;background:#ffffff;"><svg width="11" height="11" viewBox="0 0 11 11" style="left:0;top:0"><path d="M1.3 5.4 L3.8 8.4 L9.8 2" fill="none" stroke="#3a3a3a" stroke-width="1.3"/></svg></div><svg width="20" height="20" viewBox="0 0 20 20" style="left:192px;top:397px"><circle cx="10" cy="10" r="10" fill="#888888"/><path d="M11.03 10.57 L14.09 11.39 L11.87 13.86 Z M15.91 11.86 L18.85 12.49 L17.36 15.41 Z M14.94 12.21 L12.71 14.68 L16.39 15.76 Z M12.47 15.68 L16.15 16.76 L13.40 18.54 Z M10.00 10.91 L10.84 14.20 L7.58 13.51 Z M11.34 16.05 L12.27 18.91 L9.00 19.08 Z M10.56 15.38 L7.30 14.69 L8.21 18.42 Z M6.31 14.98 L7.22 18.71 L4.30 17.22 Z M9.20 10.18 L6.78 12.78 L5.75 9.62 Z M5.43 14.19 L3.42 16.42 L1.63 13.67 Z M5.62 13.17 L4.59 10.01 L1.82 12.66 Z M3.84 9.30 L1.07 11.95 L0.90 8.67 Z M9.42 9.12 L5.98 8.56 L8.20 6.09 Z M4.09 8.14 L1.15 7.51 L2.64 4.59 Z M5.06 7.79 L7.29 5.32 L3.61 4.24 Z M7.53 4.32 L3.85 3.24 L6.60 1.46 Z M10.45 8.79 L9.23 5.75 L12.49 6.45 Z M8.66 3.95 L7.73 1.09 L11.00 0.92 Z M9.44 4.62 L12.70 5.31 L11.79 1.58 Z M13.69 5.02 L12.78 1.29 L15.70 2.78 Z M11.26 9.51 L13.29 7.17 L14.32 10.33 Z M14.57 5.81 L16.58 3.58 L18.37 6.33 Z M14.38 6.83 L15.41 9.99 L18.18 7.34 Z M16.16 10.70 L18.93 8.05 L19.10 11.33 Z" fill="#2d2d2d" opacity="0.92"/></svg><div style="left:166px;top:430px;width:12px;height:1px;background:repeating-linear-gradient(to right,#7d7d7d 0,#7d7d7d 1px,transparent 1px,transparent 2px);"></div><div style="left:179px;top:423px;width:11px;height:11px;background:#ffffff;"><svg width="11" height="11" viewBox="0 0 11 11" style="left:0;top:0"><path d="M1.3 5.4 L3.8 8.4 L9.8 2" fill="none" stroke="#3a3a3a" stroke-width="1.3"/></svg></div><svg width="20" height="20" viewBox="0 0 20 20" style="left:192px;top:419px"><circle cx="10" cy="10" r="10" fill="#888888"/><path d="M11.03 10.57 L14.09 11.39 L11.87 13.86 Z M15.91 11.86 L18.85 12.49 L17.36 15.41 Z M14.94 12.21 L12.71 14.68 L16.39 15.76 Z M12.47 15.68 L16.15 16.76 L13.40 18.54 Z M10.00 10.91 L10.84 14.20 L7.58 13.51 Z M11.34 16.05 L12.27 18.91 L9.00 19.08 Z M10.56 15.38 L7.30 14.69 L8.21 18.42 Z M6.31 14.98 L7.22 18.71 L4.30 17.22 Z M9.20 10.18 L6.78 12.78 L5.75 9.62 Z M5.43 14.19 L3.42 16.42 L1.63 13.67 Z M5.62 13.17 L4.59 10.01 L1.82 12.66 Z M3.84 9.30 L1.07 11.95 L0.90 8.67 Z M9.42 9.12 L5.98 8.56 L8.20 6.09 Z M4.09 8.14 L1.15 7.51 L2.64 4.59 Z M5.06 7.79 L7.29 5.32 L3.61 4.24 Z M7.53 4.32 L3.85 3.24 L6.60 1.46 Z M10.45 8.79 L9.23 5.75 L12.49 6.45 Z M8.66 3.95 L7.73 1.09 L11.00 0.92 Z M9.44 4.62 L12.70 5.31 L11.79 1.58 Z M13.69 5.02 L12.78 1.29 L15.70 2.78 Z M11.26 9.51 L13.29 7.17 L14.32 10.33 Z M14.57 5.81 L16.58 3.58 L18.37 6.33 Z M14.38 6.83 L15.41 9.99 L18.18 7.34 Z M16.16 10.70 L18.93 8.05 L19.10 11.33 Z" fill="#2d2d2d" opacity="0.92"/></svg><div style="left:166px;top:452px;width:12px;height:1px;background:repeating-linear-gradient(to right,#7d7d7d 0,#7d7d7d 1px,transparent 1px,transparent 2px);"></div><div style="left:179px;top:445px;width:11px;height:11px;background:#ffffff;"><svg width="11" height="11" viewBox="0 0 11 11" style="left:0;top:0"><path d="M1.3 5.4 L3.8 8.4 L9.8 2" fill="none" stroke="#3a3a3a" stroke-width="1.3"/></svg></div><svg width="20" height="20" viewBox="0 0 20 20" style="left:192px;top:441px"><circle cx="10" cy="10" r="10" fill="#888888"/><path d="M11.03 10.57 L14.09 11.39 L11.87 13.86 Z M15.91 11.86 L18.85 12.49 L17.36 15.41 Z M14.94 12.21 L12.71 14.68 L16.39 15.76 Z M12.47 15.68 L16.15 16.76 L13.40 18.54 Z M10.00 10.91 L10.84 14.20 L7.58 13.51 Z M11.34 16.05 L12.27 18.91 L9.00 19.08 Z M10.56 15.38 L7.30 14.69 L8.21 18.42 Z M6.31 14.98 L7.22 18.71 L4.30 17.22 Z M9.20 10.18 L6.78 12.78 L5.75 9.62 Z M5.43 14.19 L3.42 16.42 L1.63 13.67 Z M5.62 13.17 L4.59 10.01 L1.82 12.66 Z M3.84 9.30 L1.07 11.95 L0.90 8.67 Z M9.42 9.12 L5.98 8.56 L8.20 6.09 Z M4.09 8.14 L1.15 7.51 L2.64 4.59 Z M5.06 7.79 L7.29 5.32 L3.61 4.24 Z M7.53 4.32 L3.85 3.24 L6.60 1.46 Z M10.45 8.79 L9.23 5.75 L12.49 6.45 Z M8.66 3.95 L7.73 1.09 L11.00 0.92 Z M9.44 4.62 L12.70 5.31 L11.79 1.58 Z M13.69 5.02 L12.78 1.29 L15.70 2.78 Z M11.26 9.51 L13.29 7.17 L14.32 10.33 Z M14.57 5.81 L16.58 3.58 L18.37 6.33 Z M14.38 6.83 L15.41 9.99 L18.18 7.34 Z M16.16 10.70 L18.93 8.05 L19.10 11.33 Z" fill="#2d2d2d" opacity="0.92"/></svg><div style="left:166px;top:474px;width:12px;height:1px;background:repeating-linear-gradient(to right,#7d7d7d 0,#7d7d7d 1px,transparent 1px,transparent 2px);"></div><div style="left:179px;top:467px;width:11px;height:11px;background:#ffffff;"><svg width="11" height="11" viewBox="0 0 11 11" style="left:0;top:0"><path d="M1.3 5.4 L3.8 8.4 L9.8 2" fill="none" stroke="#3a3a3a" stroke-width="1.3"/></svg></div><svg width="20" height="20" viewBox="0 0 20 20" style="left:192px;top:463px"><circle cx="10" cy="10" r="10" fill="#888888"/><path d="M11.03 10.57 L14.09 11.39 L11.87 13.86 Z M15.91 11.86 L18.85 12.49 L17.36 15.41 Z M14.94 12.21 L12.71 14.68 L16.39 15.76 Z M12.47 15.68 L16.15 16.76 L13.40 18.54 Z M10.00 10.91 L10.84 14.20 L7.58 13.51 Z M11.34 16.05 L12.27 18.91 L9.00 19.08 Z M10.56 15.38 L7.30 14.69 L8.21 18.42 Z M6.31 14.98 L7.22 18.71 L4.30 17.22 Z M9.20 10.18 L6.78 12.78 L5.75 9.62 Z M5.43 14.19 L3.42 16.42 L1.63 13.67 Z M5.62 13.17 L4.59 10.01 L1.82 12.66 Z M3.84 9.30 L1.07 11.95 L0.90 8.67 Z M9.42 9.12 L5.98 8.56 L8.20 6.09 Z M4.09 8.14 L1.15 7.51 L2.64 4.59 Z M5.06 7.79 L7.29 5.32 L3.61 4.24 Z M7.53 4.32 L3.85 3.24 L6.60 1.46 Z M10.45 8.79 L9.23 5.75 L12.49 6.45 Z M8.66 3.95 L7.73 1.09 L11.00 0.92 Z M9.44 4.62 L12.70 5.31 L11.79 1.58 Z M13.69 5.02 L12.78 1.29 L15.70 2.78 Z M11.26 9.51 L13.29 7.17 L14.32 10.33 Z M14.57 5.81 L16.58 3.58 L18.37 6.33 Z M14.38 6.83 L15.41 9.99 L18.18 7.34 Z M16.16 10.70 L18.93 8.05 L19.10 11.33 Z" fill="#2d2d2d" opacity="0.92"/></svg><div style="left:166px;top:496px;width:12px;height:1px;background:repeating-linear-gradient(to right,#7d7d7d 0,#7d7d7d 1px,transparent 1px,transparent 2px);"></div><div style="left:179px;top:489px;width:11px;height:11px;background:#ffffff;"><svg width="11" height="11" viewBox="0 0 11 11" style="left:0;top:0"><path d="M1.3 5.4 L3.8 8.4 L9.8 2" fill="none" stroke="#3a3a3a" stroke-width="1.3"/></svg></div><svg width="20" height="20" viewBox="0 0 20 20" style="left:192px;top:485px"><circle cx="10" cy="10" r="10" fill="#888888"/><path d="M11.03 10.57 L14.09 11.39 L11.87 13.86 Z M15.91 11.86 L18.85 12.49 L17.36 15.41 Z M14.94 12.21 L12.71 14.68 L16.39 15.76 Z M12.47 15.68 L16.15 16.76 L13.40 18.54 Z M10.00 10.91 L10.84 14.20 L7.58 13.51 Z M11.34 16.05 L12.27 18.91 L9.00 19.08 Z M10.56 15.38 L7.30 14.69 L8.21 18.42 Z M6.31 14.98 L7.22 18.71 L4.30 17.22 Z M9.20 10.18 L6.78 12.78 L5.75 9.62 Z M5.43 14.19 L3.42 16.42 L1.63 13.67 Z M5.62 13.17 L4.59 10.01 L1.82 12.66 Z M3.84 9.30 L1.07 11.95 L0.90 8.67 Z M9.42 9.12 L5.98 8.56 L8.20 6.09 Z M4.09 8.14 L1.15 7.51 L2.64 4.59 Z M5.06 7.79 L7.29 5.32 L3.61 4.24 Z M7.53 4.32 L3.85 3.24 L6.60 1.46 Z M10.45 8.79 L9.23 5.75 L12.49 6.45 Z M8.66 3.95 L7.73 1.09 L11.00 0.92 Z M9.44 4.62 L12.70 5.31 L11.79 1.58 Z M13.69 5.02 L12.78 1.29 L15.70 2.78 Z M11.26 9.51 L13.29 7.17 L14.32 10.33 Z M14.57 5.81 L16.58 3.58 L18.37 6.33 Z M14.38 6.83 L15.41 9.99 L18.18 7.34 Z M16.16 10.70 L18.93 8.05 L19.10 11.33 Z" fill="#2d2d2d" opacity="0.92"/></svg><div style="left:166px;top:518px;width:12px;height:1px;background:repeating-linear-gradient(to right,#7d7d7d 0,#7d7d7d 1px,transparent 1px,transparent 2px);"></div><div style="left:179px;top:511px;width:11px;height:11px;background:#ffffff;"><svg width="11" height="11" viewBox="0 0 11 11" style="left:0;top:0"><path d="M1.3 5.4 L3.8 8.4 L9.8 2" fill="none" stroke="#3a3a3a" stroke-width="1.3"/></svg></div><svg width="20" height="20" viewBox="0 0 20 20" style="left:192px;top:507px"><circle cx="10" cy="10" r="10" fill="#888888"/><path d="M11.03 10.57 L14.09 11.39 L11.87 13.86 Z M15.91 11.86 L18.85 12.49 L17.36 15.41 Z M14.94 12.21 L12.71 14.68 L16.39 15.76 Z M12.47 15.68 L16.15 16.76 L13.40 18.54 Z M10.00 10.91 L10.84 14.20 L7.58 13.51 Z M11.34 16.05 L12.27 18.91 L9.00 19.08 Z M10.56 15.38 L7.30 14.69 L8.21 18.42 Z M6.31 14.98 L7.22 18.71 L4.30 17.22 Z M9.20 10.18 L6.78 12.78 L5.75 9.62 Z M5.43 14.19 L3.42 16.42 L1.63 13.67 Z M5.62 13.17 L4.59 10.01 L1.82 12.66 Z M3.84 9.30 L1.07 11.95 L0.90 8.67 Z M9.42 9.12 L5.98 8.56 L8.20 6.09 Z M4.09 8.14 L1.15 7.51 L2.64 4.59 Z M5.06 7.79 L7.29 5.32 L3.61 4.24 Z M7.53 4.32 L3.85 3.24 L6.60 1.46 Z M10.45 8.79 L9.23 5.75 L12.49 6.45 Z M8.66 3.95 L7.73 1.09 L11.00 0.92 Z M9.44 4.62 L12.70 5.31 L11.79 1.58 Z M13.69 5.02 L12.78 1.29 L15.70 2.78 Z M11.26 9.51 L13.29 7.17 L14.32 10.33 Z M14.57 5.81 L16.58 3.58 L18.37 6.33 Z M14.38 6.83 L15.41 9.99 L18.18 7.34 Z M16.16 10.70 L18.93 8.05 L19.10 11.33 Z" fill="#2d2d2d" opacity="0.92"/></svg><div style="left:166px;top:540px;width:12px;height:1px;background:repeating-linear-gradient(to right,#7d7d7d 0,#7d7d7d 1px,transparent 1px,transparent 2px);"></div><div style="left:179px;top:533px;width:11px;height:11px;background:#ffffff;"><svg width="11" height="11" viewBox="0 0 11 11" style="left:0;top:0"><path d="M1.3 5.4 L3.8 8.4 L9.8 2" fill="none" stroke="#3a3a3a" stroke-width="1.3"/></svg></div><svg width="20" height="20" viewBox="0 0 20 20" style="left:192px;top:529px"><circle cx="10" cy="10" r="10" fill="#888888"/><path d="M11.03 10.57 L14.09 11.39 L11.87 13.86 Z M15.91 11.86 L18.85 12.49 L17.36 15.41 Z M14.94 12.21 L12.71 14.68 L16.39 15.76 Z M12.47 15.68 L16.15 16.76 L13.40 18.54 Z M10.00 10.91 L10.84 14.20 L7.58 13.51 Z M11.34 16.05 L12.27 18.91 L9.00 19.08 Z M10.56 15.38 L7.30 14.69 L8.21 18.42 Z M6.31 14.98 L7.22 18.71 L4.30 17.22 Z M9.20 10.18 L6.78 12.78 L5.75 9.62 Z M5.43 14.19 L3.42 16.42 L1.63 13.67 Z M5.62 13.17 L4.59 10.01 L1.82 12.66 Z M3.84 9.30 L1.07 11.95 L0.90 8.67 Z M9.42 9.12 L5.98 8.56 L8.20 6.09 Z M4.09 8.14 L1.15 7.51 L2.64 4.59 Z M5.06 7.79 L7.29 5.32 L3.61 4.24 Z M7.53 4.32 L3.85 3.24 L6.60 1.46 Z M10.45 8.79 L9.23 5.75 L12.49 6.45 Z M8.66 3.95 L7.73 1.09 L11.00 0.92 Z M9.44 4.62 L12.70 5.31 L11.79 1.58 Z M13.69 5.02 L12.78 1.29 L15.70 2.78 Z M11.26 9.51 L13.29 7.17 L14.32 10.33 Z M14.57 5.81 L16.58 3.58 L18.37 6.33 Z M14.38 6.83 L15.41 9.99 L18.18 7.34 Z M16.16 10.70 L18.93 8.05 L19.10 11.33 Z" fill="#2d2d2d" opacity="0.92"/></svg><div style="left:166px;top:562px;width:12px;height:1px;background:repeating-linear-gradient(to right,#7d7d7d 0,#7d7d7d 1px,transparent 1px,transparent 2px);"></div><div style="left:179px;top:555px;width:11px;height:11px;background:#ffffff;"><svg width="11" height="11" viewBox="0 0 11 11" style="left:0;top:0"><path d="M1.3 5.4 L3.8 8.4 L9.8 2" fill="none" stroke="#3a3a3a" stroke-width="1.3"/></svg></div><svg width="20" height="20" viewBox="0 0 20 20" style="left:192px;top:551px"><circle cx="10" cy="10" r="10" fill="#888888"/><path d="M11.03 10.57 L14.09 11.39 L11.87 13.86 Z M15.91 11.86 L18.85 12.49 L17.36 15.41 Z M14.94 12.21 L12.71 14.68 L16.39 15.76 Z M12.47 15.68 L16.15 16.76 L13.40 18.54 Z M10.00 10.91 L10.84 14.20 L7.58 13.51 Z M11.34 16.05 L12.27 18.91 L9.00 19.08 Z M10.56 15.38 L7.30 14.69 L8.21 18.42 Z M6.31 14.98 L7.22 18.71 L4.30 17.22 Z M9.20 10.18 L6.78 12.78 L5.75 9.62 Z M5.43 14.19 L3.42 16.42 L1.63 13.67 Z M5.62 13.17 L4.59 10.01 L1.82 12.66 Z M3.84 9.30 L1.07 11.95 L0.90 8.67 Z M9.42 9.12 L5.98 8.56 L8.20 6.09 Z M4.09 8.14 L1.15 7.51 L2.64 4.59 Z M5.06 7.79 L7.29 5.32 L3.61 4.24 Z M7.53 4.32 L3.85 3.24 L6.60 1.46 Z M10.45 8.79 L9.23 5.75 L12.49 6.45 Z M8.66 3.95 L7.73 1.09 L11.00 0.92 Z M9.44 4.62 L12.70 5.31 L11.79 1.58 Z M13.69 5.02 L12.78 1.29 L15.70 2.78 Z M11.26 9.51 L13.29 7.17 L14.32 10.33 Z M14.57 5.81 L16.58 3.58 L18.37 6.33 Z M14.38 6.83 L15.41 9.99 L18.18 7.34 Z M16.16 10.70 L18.93 8.05 L19.10 11.33 Z" fill="#2d2d2d" opacity="0.92"/></svg><div style="left:166px;top:584px;width:12px;height:1px;background:repeating-linear-gradient(to right,#7d7d7d 0,#7d7d7d 1px,transparent 1px,transparent 2px);"></div><div style="left:179px;top:577px;width:11px;height:11px;background:#ffffff;"><svg width="11" height="11" viewBox="0 0 11 11" style="left:0;top:0"><path d="M1.3 5.4 L3.8 8.4 L9.8 2" fill="none" stroke="#3a3a3a" stroke-width="1.3"/></svg></div><svg width="20" height="20" viewBox="0 0 20 20" style="left:192px;top:573px"><circle cx="10" cy="10" r="10" fill="#888888"/><path d="M11.03 10.57 L14.09 11.39 L11.87 13.86 Z M15.91 11.86 L18.85 12.49 L17.36 15.41 Z M14.94 12.21 L12.71 14.68 L16.39 15.76 Z M12.47 15.68 L16.15 16.76 L13.40 18.54 Z M10.00 10.91 L10.84 14.20 L7.58 13.51 Z M11.34 16.05 L12.27 18.91 L9.00 19.08 Z M10.56 15.38 L7.30 14.69 L8.21 18.42 Z M6.31 14.98 L7.22 18.71 L4.30 17.22 Z M9.20 10.18 L6.78 12.78 L5.75 9.62 Z M5.43 14.19 L3.42 16.42 L1.63 13.67 Z M5.62 13.17 L4.59 10.01 L1.82 12.66 Z M3.84 9.30 L1.07 11.95 L0.90 8.67 Z M9.42 9.12 L5.98 8.56 L8.20 6.09 Z M4.09 8.14 L1.15 7.51 L2.64 4.59 Z M5.06 7.79 L7.29 5.32 L3.61 4.24 Z M7.53 4.32 L3.85 3.24 L6.60 1.46 Z M10.45 8.79 L9.23 5.75 L12.49 6.45 Z M8.66 3.95 L7.73 1.09 L11.00 0.92 Z M9.44 4.62 L12.70 5.31 L11.79 1.58 Z M13.69 5.02 L12.78 1.29 L15.70 2.78 Z M11.26 9.51 L13.29 7.17 L14.32 10.33 Z M14.57 5.81 L16.58 3.58 L18.37 6.33 Z M14.38 6.83 L15.41 9.99 L18.18 7.34 Z M16.16 10.70 L18.93 8.05 L19.10 11.33 Z" fill="#2d2d2d" opacity="0.92"/></svg><div style="left:166px;top:606px;width:12px;height:1px;background:repeating-linear-gradient(to right,#7d7d7d 0,#7d7d7d 1px,transparent 1px,transparent 2px);"></div><div style="left:179px;top:599px;width:11px;height:11px;background:#ffffff;"><svg width="11" height="11" viewBox="0 0 11 11" style="left:0;top:0"><path d="M1.3 5.4 L3.8 8.4 L9.8 2" fill="none" stroke="#3a3a3a" stroke-width="1.3"/></svg></div><svg width="20" height="20" viewBox="0 0 20 20" style="left:192px;top:595px"><circle cx="10" cy="10" r="10" fill="#888888"/><path d="M11.03 10.57 L14.09 11.39 L11.87 13.86 Z M15.91 11.86 L18.85 12.49 L17.36 15.41 Z M14.94 12.21 L12.71 14.68 L16.39 15.76 Z M12.47 15.68 L16.15 16.76 L13.40 18.54 Z M10.00 10.91 L10.84 14.20 L7.58 13.51 Z M11.34 16.05 L12.27 18.91 L9.00 19.08 Z M10.56 15.38 L7.30 14.69 L8.21 18.42 Z M6.31 14.98 L7.22 18.71 L4.30 17.22 Z M9.20 10.18 L6.78 12.78 L5.75 9.62 Z M5.43 14.19 L3.42 16.42 L1.63 13.67 Z M5.62 13.17 L4.59 10.01 L1.82 12.66 Z M3.84 9.30 L1.07 11.95 L0.90 8.67 Z M9.42 9.12 L5.98 8.56 L8.20 6.09 Z M4.09 8.14 L1.15 7.51 L2.64 4.59 Z M5.06 7.79 L7.29 5.32 L3.61 4.24 Z M7.53 4.32 L3.85 3.24 L6.60 1.46 Z M10.45 8.79 L9.23 5.75 L12.49 6.45 Z M8.66 3.95 L7.73 1.09 L11.00 0.92 Z M9.44 4.62 L12.70 5.31 L11.79 1.58 Z M13.69 5.02 L12.78 1.29 L15.70 2.78 Z M11.26 9.51 L13.29 7.17 L14.32 10.33 Z M14.57 5.81 L16.58 3.58 L18.37 6.33 Z M14.38 6.83 L15.41 9.99 L18.18 7.34 Z M16.16 10.70 L18.93 8.05 L19.10 11.33 Z" fill="#2d2d2d" opacity="0.92"/></svg><div style="left:166px;top:628px;width:12px;height:1px;background:repeating-linear-gradient(to right,#7d7d7d 0,#7d7d7d 1px,transparent 1px,transparent 2px);"></div><div style="left:179px;top:621px;width:11px;height:11px;background:#ffffff;"><svg width="11" height="11" viewBox="0 0 11 11" style="left:0;top:0"><path d="M1.3 5.4 L3.8 8.4 L9.8 2" fill="none" stroke="#3a3a3a" stroke-width="1.3"/></svg></div><svg width="20" height="20" viewBox="0 0 20 20" style="left:192px;top:617px"><circle cx="10" cy="10" r="10" fill="#888888"/><path d="M11.03 10.57 L14.09 11.39 L11.87 13.86 Z M15.91 11.86 L18.85 12.49 L17.36 15.41 Z M14.94 12.21 L12.71 14.68 L16.39 15.76 Z M12.47 15.68 L16.15 16.76 L13.40 18.54 Z M10.00 10.91 L10.84 14.20 L7.58 13.51 Z M11.34 16.05 L12.27 18.91 L9.00 19.08 Z M10.56 15.38 L7.30 14.69 L8.21 18.42 Z M6.31 14.98 L7.22 18.71 L4.30 17.22 Z M9.20 10.18 L6.78 12.78 L5.75 9.62 Z M5.43 14.19 L3.42 16.42 L1.63 13.67 Z M5.62 13.17 L4.59 10.01 L1.82 12.66 Z M3.84 9.30 L1.07 11.95 L0.90 8.67 Z M9.42 9.12 L5.98 8.56 L8.20 6.09 Z M4.09 8.14 L1.15 7.51 L2.64 4.59 Z M5.06 7.79 L7.29 5.32 L3.61 4.24 Z M7.53 4.32 L3.85 3.24 L6.60 1.46 Z M10.45 8.79 L9.23 5.75 L12.49 6.45 Z M8.66 3.95 L7.73 1.09 L11.00 0.92 Z M9.44 4.62 L12.70 5.31 L11.79 1.58 Z M13.69 5.02 L12.78 1.29 L15.70 2.78 Z M11.26 9.51 L13.29 7.17 L14.32 10.33 Z M14.57 5.81 L16.58 3.58 L18.37 6.33 Z M14.38 6.83 L15.41 9.99 L18.18 7.34 Z M16.16 10.70 L18.93 8.05 L19.10 11.33 Z" fill="#2d2d2d" opacity="0.92"/></svg><div style="left:166px;top:650px;width:12px;height:1px;background:repeating-linear-gradient(to right,#7d7d7d 0,#7d7d7d 1px,transparent 1px,transparent 2px);"></div><div style="left:179px;top:643px;width:11px;height:11px;background:#ffffff;"><svg width="11" height="11" viewBox="0 0 11 11" style="left:0;top:0"><path d="M1.3 5.4 L3.8 8.4 L9.8 2" fill="none" stroke="#3a3a3a" stroke-width="1.3"/></svg></div><svg width="20" height="20" viewBox="0 0 20 20" style="left:192px;top:639px"><circle cx="10" cy="10" r="10" fill="#888888"/><path d="M11.03 10.57 L14.09 11.39 L11.87 13.86 Z M15.91 11.86 L18.85 12.49 L17.36 15.41 Z M14.94 12.21 L12.71 14.68 L16.39 15.76 Z M12.47 15.68 L16.15 16.76 L13.40 18.54 Z M10.00 10.91 L10.84 14.20 L7.58 13.51 Z M11.34 16.05 L12.27 18.91 L9.00 19.08 Z M10.56 15.38 L7.30 14.69 L8.21 18.42 Z M6.31 14.98 L7.22 18.71 L4.30 17.22 Z M9.20 10.18 L6.78 12.78 L5.75 9.62 Z M5.43 14.19 L3.42 16.42 L1.63 13.67 Z M5.62 13.17 L4.59 10.01 L1.82 12.66 Z M3.84 9.30 L1.07 11.95 L0.90 8.67 Z M9.42 9.12 L5.98 8.56 L8.20 6.09 Z M4.09 8.14 L1.15 7.51 L2.64 4.59 Z M5.06 7.79 L7.29 5.32 L3.61 4.24 Z M7.53 4.32 L3.85 3.24 L6.60 1.46 Z M10.45 8.79 L9.23 5.75 L12.49 6.45 Z M8.66 3.95 L7.73 1.09 L11.00 0.92 Z M9.44 4.62 L12.70 5.31 L11.79 1.58 Z M13.69 5.02 L12.78 1.29 L15.70 2.78 Z M11.26 9.51 L13.29 7.17 L14.32 10.33 Z M14.57 5.81 L16.58 3.58 L18.37 6.33 Z M14.38 6.83 L15.41 9.99 L18.18 7.34 Z M16.16 10.70 L18.93 8.05 L19.10 11.33 Z" fill="#2d2d2d" opacity="0.92"/></svg><div style="left:166px;top:672px;width:12px;height:1px;background:repeating-linear-gradient(to right,#7d7d7d 0,#7d7d7d 1px,transparent 1px,transparent 2px);"></div><div style="left:179px;top:665px;width:11px;height:11px;background:#ffffff;"><svg width="11" height="11" viewBox="0 0 11 11" style="left:0;top:0"><path d="M1.3 5.4 L3.8 8.4 L9.8 2" fill="none" stroke="#3a3a3a" stroke-width="1.3"/></svg></div><svg width="20" height="20" viewBox="0 0 20 20" style="left:192px;top:661px"><circle cx="10" cy="10" r="10" fill="#888888"/><path d="M11.03 10.57 L14.09 11.39 L11.87 13.86 Z M15.91 11.86 L18.85 12.49 L17.36 15.41 Z M14.94 12.21 L12.71 14.68 L16.39 15.76 Z M12.47 15.68 L16.15 16.76 L13.40 18.54 Z M10.00 10.91 L10.84 14.20 L7.58 13.51 Z M11.34 16.05 L12.27 18.91 L9.00 19.08 Z M10.56 15.38 L7.30 14.69 L8.21 18.42 Z M6.31 14.98 L7.22 18.71 L4.30 17.22 Z M9.20 10.18 L6.78 12.78 L5.75 9.62 Z M5.43 14.19 L3.42 16.42 L1.63 13.67 Z M5.62 13.17 L4.59 10.01 L1.82 12.66 Z M3.84 9.30 L1.07 11.95 L0.90 8.67 Z M9.42 9.12 L5.98 8.56 L8.20 6.09 Z M4.09 8.14 L1.15 7.51 L2.64 4.59 Z M5.06 7.79 L7.29 5.32 L3.61 4.24 Z M7.53 4.32 L3.85 3.24 L6.60 1.46 Z M10.45 8.79 L9.23 5.75 L12.49 6.45 Z M8.66 3.95 L7.73 1.09 L11.00 0.92 Z M9.44 4.62 L12.70 5.31 L11.79 1.58 Z M13.69 5.02 L12.78 1.29 L15.70 2.78 Z M11.26 9.51 L13.29 7.17 L14.32 10.33 Z M14.57 5.81 L16.58 3.58 L18.37 6.33 Z M14.38 6.83 L15.41 9.99 L18.18 7.34 Z M16.16 10.70 L18.93 8.05 L19.10 11.33 Z" fill="#2d2d2d" opacity="0.92"/></svg><div style="left:145px;top:694px;width:8px;height:1px;background:repeating-linear-gradient(to right,#7d7d7d 0,#7d7d7d 1px,transparent 1px,transparent 2px);"></div><svg width="9" height="9" viewBox="0 0 9 9" style="left:135px;top:690px"><rect x="0" y="0" width="9" height="9" rx="1" fill="#f2f2f2"/><rect x="0.5" y="0.5" width="8" height="8" rx="1" fill="none" stroke="#b8b8b8"/><path d="M2 4.5 H7" stroke="#2b3f9c" stroke-width="1"/><path d="M4.5 2 V7" stroke="#2b3f9c" stroke-width="1"/></svg><svg width="19" height="16" viewBox="0 0 19 16" style="left:155px;top:685.5px"><path d="M0.5 2 Q0.5 0.6 1.8 0.6 H6.4 L8 2.4 H17 Q18.4 2.4 18.4 3.8 V14 Q18.4 15.4 17 15.4 H1.9 Q0.5 15.4 0.5 14 Z" fill="#e9b84a"/><path d="M0.5 4.2 H18.4 V14 Q18.4 15.4 17 15.4 H1.9 Q0.5 15.4 0.5 14 Z" fill="#f4cd62"/></svg><span class="t" style="left:167.20px;top:2.69px;letter-spacing:-0.19px">boomerang</span><span class="t" style="left:167.20px;top:24.69px;letter-spacing:-0.19px">bottlecap</span><span class="t" style="left:167.20px;top:46.69px;letter-spacing:-0.19px">bottleemp</span><span class="t" style="left:167.20px;top:68.69px;letter-spacing:-0.19px">bow</span><span class="t" style="left:167.20px;top:90.69px;letter-spacing:-0.19px">camera</span><span class="t" style="left:167.20px;top:112.69px;letter-spacing:-0.19px">cl</span><span class="t" style="left:179.40px;top:134.69px;letter-spacing:-0.19px">Objects</span><span class="t" style="left:217.40px;top:156.69px;letter-spacing:-0.19px">link_root__ear</span><span class="t" style="left:217.40px;top:178.69px;letter-spacing:-0.19px">link_root__ear_2_</span><span class="t" style="left:217.40px;top:200.69px;letter-spacing:-0.19px">link_root__ear_3_</span><span class="t" style="left:217.40px;top:222.69px;letter-spacing:-0.19px">link_root__ear_4_</span><span class="t" style="left:217.40px;top:244.69px;letter-spacing:-0.19px">link_root__face</span><span class="t" style="left:217.40px;top:266.69px;letter-spacing:-0.19px">link_root__mouth</span><span class="t" style="left:217.40px;top:288.69px;letter-spacing:-0.19px">link_root__sleeve</span><span class="t" style="left:217.40px;top:310.69px;letter-spacing:-0.19px">cl_LhandA__ear_5_</span><span class="t" style="left:217.40px;top:332.69px;letter-spacing:-0.19px">cl_RhandA__ear_6_</span><span class="t" style="left:217.40px;top:354.69px;letter-spacing:-0.19px">cl_podA__podA</span><span class="t" style="left:217.40px;top:376.69px;letter-spacing:-0.19px">cl_eye__eyeL</span><span class="t" style="left:217.40px;top:398.69px;letter-spacing:-0.19px">cl_eye__eyeLdamA</span><span class="t" style="left:217.40px;top:420.69px;letter-spacing:-0.19px">cl_eye__eyeLdamB</span><span class="t" style="left:217.40px;top:442.69px;letter-spacing:-0.19px">cl_eye__eyeR</span><span class="t" style="left:217.40px;top:464.69px;letter-spacing:-0.19px">cl_eye__eyeRdamA</span><span class="t" style="left:217.40px;top:486.69px;letter-spacing:-0.19px">cl_eye__eyeRdamB</span><span class="t" style="left:217.40px;top:508.69px;letter-spacing:-0.19px">cl_hana__ear_7_</span><span class="t" style="left:217.40px;top:530.69px;letter-spacing:-0.19px">cl_mayu__mayuL</span><span class="t" style="left:217.40px;top:552.69px;letter-spacing:-0.19px">cl_mayu__mayuLdamA</span><span class="t" style="left:217.40px;top:574.69px;letter-spacing:-0.19px">cl_mayu__mayuLdamB</span><span class="t" style="left:217.40px;top:596.69px;letter-spacing:-0.19px">cl_mayu__mayuR</span><span class="t" style="left:217.40px;top:618.69px;letter-spacing:-0.19px">cl_mayu__mayuRdamA</span><span class="t" style="left:217.40px;top:640.69px;letter-spacing:-0.19px">cl_mayu__mayuRdamB</span><span class="t" style="left:217.40px;top:662.69px;letter-spacing:-0.19px">cl_back__ear_8_</span><span class="t" style="left:179.40px;top:684.69px;letter-spacing:-0.19px">Materials</span></div>
<div style="left:323px;top:149px;width:17px;height:708px;background:#f0f0f0;"></div>
<div style="left:3px;top:840px;width:320px;height:17px;background:#f0f0f0;"></div>
<div style="left:324px;top:388px;width:15px;height:123px;background:#cdcdcd;"></div>
<div style="left:20px;top:841px;width:276px;height:15px;background:#cdcdcd;"></div>
<svg width="9" height="7" viewBox="0 0 9 7" style="left:327px;top:154.5px"><path d="M0.9 6 L4.5 2.2 L8.1 6" fill="none" stroke="#565656" stroke-width="2.4"/></svg>
<svg width="9" height="7" viewBox="0 0 9 7" style="left:327px;top:828.5px"><path d="M0.9 1 L4.5 4.8 L8.1 1" fill="none" stroke="#565656" stroke-width="2.4"/></svg>
<svg width="7" height="9" viewBox="0 0 7 9" style="left:7.5px;top:844px"><path d="M5.6 1 L2 4.5 L5.6 8" fill="none" stroke="#565656" stroke-width="2.2"/></svg>
<svg width="7" height="9" viewBox="0 0 7 9" style="left:311.5px;top:844px"><path d="M1.4 1 L5 4.5 L1.4 8" fill="none" stroke="#565656" stroke-width="2.2"/></svg>
<div style="left:344px;top:97px;width:14px;height:760px;background:#333333;border-left:1px solid #404040;border-right:1px solid #404040;"></div>
<div style="left:340px;top:97px;width:4px;height:760px;background:#2f2f2f;"></div>
<span class="t" style="left:18.00px;top:103.34px;font-size:12px;color:#fff;letter-spacing:-0.445px;">File</span>
<span class="t" style="left:55.20px;top:103.34px;font-size:12px;color:#fff;letter-spacing:-0.331px;">View</span>
<span class="t" style="left:195.40px;top:101.19px;font-size:11px;color:#fff;letter-spacing:-0.219px;">Add Files to Active Editor</span>
<span class="t" style="left:178.80px;top:125.69px;font-size:11px;color:#fff;letter-spacing:-0.570px;">Normal</span>
<span class="t" style="left:346.50px;top:470.88px;font-size:9px;color:#4a4a4a;">&lt;</span>
</div>
<div id="viewport-panel" style="left:0;top:0;width:0;height:0;">
<div style="left:358px;top:97px;width:765px;height:79px;background:#323232;"></div>
<div style="left:362px;top:103px;width:3px;height:3px;background:#272727;"></div>
<div style="left:361px;top:102px;width:2px;height:2px;background:#c4c4c4;"></div>
<div style="left:362px;top:103px;width:2px;height:2px;background:#ffffff;"></div>
<div style="left:362px;top:107px;width:3px;height:3px;background:#272727;"></div>
<div style="left:361px;top:106px;width:2px;height:2px;background:#c4c4c4;"></div>
<div style="left:362px;top:107px;width:2px;height:2px;background:#ffffff;"></div>
<div style="left:362px;top:111px;width:3px;height:3px;background:#272727;"></div>
<div style="left:361px;top:110px;width:2px;height:2px;background:#c4c4c4;"></div>
<div style="left:362px;top:111px;width:2px;height:2px;background:#ffffff;"></div>
<div style="left:362px;top:115px;width:3px;height:3px;background:#272727;"></div>
<div style="left:361px;top:114px;width:2px;height:2px;background:#c4c4c4;"></div>
<div style="left:362px;top:115px;width:2px;height:2px;background:#ffffff;"></div>
<div style="left:370px;top:102px;width:16px;height:16px;background:#000000;"></div>
<div style="left:451px;top:152px;width:183px;height:21px;background:#464646;"></div>
<svg width="8" height="4" viewBox="0 0 8 4" style="left:621.5px;top:160px"><path d="M0.3 0.2 H7.3 L3.8 3.7 Z" fill="#a6a6a6"/></svg>
<div style="left:640px;top:154px;width:15px;height:15px;background:#282828;"></div>
<div style="left:358px;top:176px;width:765px;height:532px;background:linear-gradient(to bottom,#1c1c1c 0%,#212121 14%,#444444 100%);"></div>
<div style="left:1063px;top:194px;width:40px;height:40px;background:#130600;border:2px solid #3a1100;"></div>
<span class="t" style="left:1074.3px;top:194.2px;font-size:34px;line-height:38px;font-weight:bold;color:#3a1300;transform:scaleX(0.74);transform-origin:0 0;">F</span>
<span class="t" style="left:371.60px;top:102.39px;font-size:11px;color:#fff;font-weight:bold;letter-spacing:-0.462px;">3D</span>
<span class="t" style="left:373.40px;top:129.84px;font-size:12px;color:#fff;letter-spacing:-0.398px;">View</span>
<span class="t" style="left:417.30px;top:129.84px;font-size:12px;color:#fff;letter-spacing:-0.047px;">Shading: [Default]</span>
<span class="t" style="left:531.40px;top:129.84px;font-size:12px;color:#fff;letter-spacing:-0.416px;">Camera</span>
<span class="t" style="left:591.20px;top:129.84px;font-size:12px;color:#fff;letter-spacing:-0.670px;">Reset Pose</span>
<span class="t" style="left:666.40px;top:129.84px;font-size:12px;color:#fff;letter-spacing:0.041px;">Options</span>
<span class="t" style="left:727.40px;top:129.84px;font-size:12px;color:#fff;letter-spacing:-0.483px;">UV Viewer</span>
<span class="t" style="left:364.00px;top:154.19px;font-size:11px;color:#fff;letter-spacing:-0.237px;">Active Model(s):</span>
<span class="t" style="left:453.80px;top:153.69px;font-size:11px;color:#fff;letter-spacing:-0.232px;">Link.bfres</span>
<span class="t" style="left:659.00px;top:154.19px;font-size:11px;color:#fff;letter-spacing:-0.385px;">Display All</span>
</div>
<div id="import-settings-dialog" style="left:0;top:0;width:0;height:0;">
<div style="left:526px;top:224px;width:547px;height:412px;background:#2b2b2b;"></div>
<div style="left:529px;top:250px;width:541px;height:383px;background:#343434;"></div>
<svg width="60" height="20" viewBox="0 0 60 20" style="left:1002px;top:229px"><path d="M5.5 10 H16.5" stroke="#8c8c8c" stroke-width="2"/><path d="M44 5 L54 15 M54 5 L44 15" stroke="#d0d0d0" stroke-width="1.1"/></svg>
<div style="left:531px;top:281px;width:534px;height:350px;background:#3d3d3d;"></div>
<div style="left:531px;top:259px;width:110px;height:22px;background:#343434;border:1px solid #222;border-bottom:none;border-radius:4px 4px 0 0;"></div>
<div style="left:640px;top:259px;width:133px;height:22px;background:#343434;border:1px solid #222;border-bottom:none;border-radius:4px 4px 0 0;"></div>
<div style="left:772px;top:259px;width:88px;height:23px;background:#3d3d3d;border:1px solid #222;border-bottom:none;border-radius:4px 4px 0 0;"></div>
<div style="left:552px;top:288px;width:15px;height:15px;background:#5179c6;"><svg width="15" height="15" viewBox="0 0 15 15" style="left:0;top:0"><path d="M2.8 8.3 L6 11.7 L13 3.3" fill="none" stroke="#f0f0f0" stroke-width="2.3" stroke-linejoin="round"/></svg></div>
<div style="left:552px;top:311px;width:15px;height:15px;background:#5179c6;"><svg width="15" height="15" viewBox="0 0 15 15" style="left:0;top:0"><path d="M2.8 8.3 L6 11.7 L13 3.3" fill="none" stroke="#f0f0f0" stroke-width="2.3" stroke-linejoin="round"/></svg></div>
<div style="left:552px;top:334px;width:15px;height:15px;background:#5179c6;"><svg width="15" height="15" viewBox="0 0 15 15" style="left:0;top:0"><path d="M2.8 8.3 L6 11.7 L13 3.3" fill="none" stroke="#f0f0f0" stroke-width="2.3" stroke-linejoin="round"/></svg></div>
<div style="left:552px;top:357px;width:15px;height:15px;background:#5179c6;"><svg width="15" height="15" viewBox="0 0 15 15" style="left:0;top:0"><path d="M2.8 8.3 L6 11.7 L13 3.3" fill="none" stroke="#f0f0f0" stroke-width="2.3" stroke-linejoin="round"/></svg></div>
<div style="left:793px;top:334px;width:210px;height:20px;background:#323232;border:1px solid #8a8a8a;"></div>
<div style="left:793px;top:379px;width:121px;height:230px;background:#2c2c2c;"></div>
<div style="left:928px;top:379px;width:121px;height:230px;background:#2c2c2c;"></div>
<span class="t" style="left:552.30px;top:230.50px;font-size:13px;color:#fff;font-weight:bold;letter-spacing:-0.038px;">Import Settings</span>
<span class="t" style="left:549.50px;top:262.19px;font-size:11px;color:#7f7f7f;letter-spacing:-0.082px;">Model Settings</span>
<span class="t" style="left:660.30px;top:262.19px;font-size:11px;color:#7f7f7f;letter-spacing:-0.045px;">Advanced Settings</span>
<span class="t" style="left:787.10px;top:262.19px;font-size:11px;color:#fff;letter-spacing:-0.006px;">Inject Mode</span>
<span class="t" style="left:571.40px;top:288.19px;font-size:11px;color:#fff;letter-spacing:-0.218px;">Keep Original Skin Count (can help crashes)</span>
<span class="t" style="left:571.40px;top:311.19px;font-size:11px;color:#fff;letter-spacing:-0.311px;">Map Original Materials (if mesh names match)</span>
<span class="t" style="left:571.40px;top:334.19px;font-size:11px;color:#fff;letter-spacing:-0.293px;">Use Original Attributes</span>
<span class="t" style="left:571.40px;top:357.19px;font-size:11px;color:#fff;letter-spacing:-0.339px;">Use Original Attribute Formats</span>
<span class="t" style="left:792.50px;top:362.19px;font-size:11px;color:#fff;letter-spacing:-0.530px;">Current</span>
<span class="t" style="left:927.60px;top:362.19px;font-size:11px;color:#fff;letter-spacing:-0.429px;">Original</span>
</div>
<div id="timeline-panel" style="left:0;top:0;width:0;height:0;">
<div style="left:358px;top:708px;width:765px;height:149px;background:#323232;"></div>
<div style="left:360px;top:734px;width:761px;height:122px;background:#3a3a3a;"></div>
<div style="left:360px;top:713px;width:69px;height:22px;background:#3a3a3a;border:1px solid #2a2a2a;border-bottom:none;border-radius:4px 4px 0 0;"></div>
<div style="left:428px;top:713px;width:70px;height:22px;background:#313131;border:1px solid #202020;border-radius:4px 4px 0 0;"></div>
<div style="left:365px;top:739px;width:751px;height:111px;background:#323232;"></div>
<div style="left:365px;top:769px;width:751px;height:50px;background:#141414;"></div>
<div style="left:420px;top:769px;width:1px;height:50px;background:#1e1e1e;"></div>
<div style="left:456px;top:769px;width:1px;height:50px;background:#1e1e1e;"></div>
<div style="left:491px;top:769px;width:1px;height:50px;background:#1e1e1e;"></div>
<div style="left:527px;top:769px;width:1px;height:50px;background:#1e1e1e;"></div>
<div style="left:562px;top:769px;width:1px;height:50px;background:#1e1e1e;"></div>
<div style="left:598px;top:769px;width:1px;height:50px;background:#1e1e1e;"></div>
<div style="left:634px;top:769px;width:1px;height:50px;background:#1e1e1e;"></div>
<div style="left:669px;top:769px;width:1px;height:50px;background:#1e1e1e;"></div>
<div style="left:705px;top:769px;width:1px;height:50px;background:#1e1e1e;"></div>
<div style="left:740px;top:769px;width:1px;height:50px;background:#1e1e1e;"></div>
<div style="left:776px;top:769px;width:1px;height:50px;background:#1e1e1e;"></div>
<div style="left:811px;top:769px;width:1px;height:50px;background:#1e1e1e;"></div>
<div style="left:847px;top:769px;width:1px;height:50px;background:#1e1e1e;"></div>
<div style="left:883px;top:769px;width:1px;height:50px;background:#1e1e1e;"></div>
<div style="left:918px;top:769px;width:1px;height:50px;background:#1e1e1e;"></div>
<div style="left:954px;top:769px;width:1px;height:50px;background:#1e1e1e;"></div>
<div style="left:989px;top:769px;width:1px;height:50px;background:#1e1e1e;"></div>
<div style="left:1025px;top:769px;width:1px;height:50px;background:#1e1e1e;"></div>
<div style="left:1060px;top:769px;width:1px;height:50px;background:#1e1e1e;"></div>
<div style="left:1096px;top:769px;width:1px;height:50px;background:#1e1e1e;"></div>
<div style="left:384px;top:769px;width:2px;height:50px;background:#80721a;"></div>
<svg width="34" height="21" viewBox="0 0 34 21" style="left:382px;top:825px"><rect x="0.5" y="0.5" width="33" height="20" fill="#323232" stroke="#f4f4f4"/><path d="M26.5 1 V20 L6 10.5 Z" fill="#c0c0c0"/><rect x="26" y="1" width="1" height="19" fill="#e8e8e8"/></svg>
<svg width="31" height="21" viewBox="0 0 31 21" style="left:422px;top:825px"><rect x="0.5" y="0.5" width="30" height="20" fill="#323232" stroke="#f4f4f4"/><path d="M5.5 1 V20 L26 10.5 Z" fill="#c0c0c0"/><rect x="5" y="1" width="1" height="19" fill="#e8e8e8"/></svg>
<div style="left:937px;top:826px;width:15px;height:15px;background:#5179c6;"><svg width="15" height="15" viewBox="0 0 15 15" style="left:0;top:0"><path d="M2.8 8.3 L6 11.7 L13 3.3" fill="none" stroke="#f0f0f0" stroke-width="2.3" stroke-linejoin="round"/></svg></div>
<div style="left:1034px;top:828px;width:16px;height:16px;background:#f2f2f2;"><svg width="16" height="16" viewBox="0 0 16 16" style="left:0;top:0"><rect x="0" y="0" width="16" height="16" fill="#f2f2f2"/><rect x="1" y="1" width="1" height="14" fill="#b4b4b4"/><rect x="14" y="1" width="1" height="14" fill="#b4b4b4"/><rect x="1" y="7.5" width="14" height="1" fill="#bcbcbc"/><rect x="1" y="14" width="14" height="1" fill="#c4c4c4"/><path d="M4.9 6 L7.5 3 L10.1 6 Z" fill="#000"/><path d="M4.9 10 L7.5 13 L10.1 10 Z" fill="#000"/></svg></div>
<div style="left:1097px;top:828px;width:16px;height:16px;background:#f2f2f2;"><svg width="16" height="16" viewBox="0 0 16 16" style="left:0;top:0"><rect x="0" y="0" width="16" height="16" fill="#f2f2f2"/><rect x="1" y="1" width="1" height="14" fill="#b4b4b4"/><rect x="14" y="1" width="1" height="14" fill="#b4b4b4"/><rect x="1" y="7.5" width="14" height="1" fill="#bcbcbc"/><rect x="1" y="14" width="14" height="1" fill="#c4c4c4"/><path d="M4.9 6 L7.5 3 L10.1 6 Z" fill="#000"/><path d="M4.9 10 L7.5 13 L10.1 10 Z" fill="#000"/></svg></div>
<span class="t" style="left:372.00px;top:715.69px;font-size:11px;color:#fff;letter-spacing:0.263px;">Timeline</span>
<span class="t" style="left:440.00px;top:715.69px;font-size:11px;color:#7f7f7f;letter-spacing:0.204px;">Textures</span>
<span class="t" style="left:380.60px;top:754.24px;font-size:12px;color:#f4ee10;">0</span>
<span class="t" style="left:411.52px;top:753.97px;font-size:12.5px;color:#5c5c5c;letter-spacing:-1.004px;">10</span>
<span class="t" style="left:447.09px;top:753.97px;font-size:12.5px;color:#5c5c5c;letter-spacing:-1.004px;">20</span>
<span class="t" style="left:482.66px;top:753.97px;font-size:12.5px;color:#5c5c5c;letter-spacing:-1.004px;">30</span>
<span class="t" style="left:518.23px;top:753.97px;font-size:12.5px;color:#5c5c5c;letter-spacing:-1.004px;">40</span>
<span class="t" style="left:553.80px;top:753.97px;font-size:12.5px;color:#5c5c5c;letter-spacing:-1.004px;">50</span>
<span class="t" style="left:589.37px;top:753.97px;font-size:12.5px;color:#5c5c5c;letter-spacing:-1.004px;">60</span>
<span class="t" style="left:624.94px;top:753.97px;font-size:12.5px;color:#5c5c5c;letter-spacing:-1.004px;">70</span>
<span class="t" style="left:660.51px;top:753.97px;font-size:12.5px;color:#5c5c5c;letter-spacing:-1.004px;">80</span>
<span class="t" style="left:696.08px;top:753.97px;font-size:12.5px;color:#5c5c5c;letter-spacing:-1.004px;">90</span>
<span class="t" style="left:728.27px;top:753.97px;font-size:12.5px;color:#5c5c5c;letter-spacing:-0.603px;">100</span>
<span class="t" style="left:763.84px;top:753.97px;font-size:12.5px;color:#5c5c5c;letter-spacing:-0.139px;">110</span>
<span class="t" style="left:799.41px;top:753.97px;font-size:12.5px;color:#5c5c5c;letter-spacing:-0.603px;">120</span>
<span class="t" style="left:834.98px;top:753.97px;font-size:12.5px;color:#5c5c5c;letter-spacing:-0.603px;">130</span>
<span class="t" style="left:870.55px;top:753.97px;font-size:12.5px;color:#5c5c5c;letter-spacing:-0.603px;">140</span>
<span class="t" style="left:906.12px;top:753.97px;font-size:12.5px;color:#5c5c5c;letter-spacing:-0.603px;">150</span>
<span class="t" style="left:941.69px;top:753.97px;font-size:12.5px;color:#5c5c5c;letter-spacing:-0.603px;">160</span>
<span class="t" style="left:977.26px;top:753.97px;font-size:12.5px;color:#5c5c5c;letter-spacing:-0.603px;">170</span>
<span class="t" style="left:1012.84px;top:753.97px;font-size:12.5px;color:#5c5c5c;letter-spacing:-0.603px;">180</span>
<span class="t" style="left:1048.40px;top:753.97px;font-size:12.5px;color:#5c5c5c;letter-spacing:-0.603px;">190</span>
<span class="t" style="left:1083.97px;top:753.97px;font-size:12.5px;color:#5c5c5c;letter-spacing:-0.603px;">200</span>
<span class="t" style="left:956.50px;top:826.19px;font-size:11px;color:#fff;letter-spacing:-0.657px;">Loop</span>
<span class="t" style="left:993.00px;top:826.84px;font-size:12px;color:#fff;">0</span>
<span class="t" style="left:1056.00px;top:826.84px;font-size:12px;color:#fff;">0</span>
</div>
<div id="shape-panel" style="left:0;top:0;width:0;height:0;">
<div style="left:1123px;top:97px;width:477px;height:760px;background:#323232;"></div>
<div style="left:1597px;top:97px;width:3px;height:763px;background:#272727;"></div>
<div style="left:0px;top:857px;width:1600px;height:3px;background:#292929;"></div>
<div style="left:0px;top:97px;width:3px;height:763px;background:#2b2b2b;"></div>
<div style="left:1130px;top:150px;width:465px;height:705px;background:#3c3c3c;"></div>
<div style="left:1130px;top:128px;width:86px;height:23px;background:#3c3c3c;border:1px solid #2a2a2a;border-bottom:none;border-radius:4px 4px 0 0;"></div>
<svg width="13" height="9" viewBox="0 0 13 9" style="left:1143px;top:161px"><path d="M0 0 H13 L6.5 9 Z" fill="#8c8c8c"/></svg>
<div style="left:1134px;top:174px;width:456px;height:96px;background:#323232;"></div>
<div style="left:1217px;top:184px;width:227px;height:20px;background:#323232;border:1px solid #7a7a7a;"></div>
<div style="left:1492px;top:186px;width:86px;height:20px;background:#323232;border:1px solid #d4d4d4;"></div>
<div style="left:1561px;top:187px;width:16px;height:18px;background:#f2f2f2;"><svg width="16" height="18" viewBox="0 0 16 18" style="left:0;top:0"><rect x="0" y="0" width="16" height="18" fill="#f2f2f2"/><rect x="1" y="1" width="1" height="16" fill="#b4b4b4"/><rect x="14" y="1" width="1" height="16" fill="#b4b4b4"/><rect x="1" y="8.5" width="14" height="1" fill="#bcbcbc"/><rect x="1" y="16" width="14" height="1" fill="#c4c4c4"/><path d="M4.9 6 L7.5 3 L10.1 6 Z" fill="#000"/><path d="M4.9 11 L7.5 14 L10.1 11 Z" fill="#000"/></svg></div>
<div style="left:1217px;top:213px;width:121px;height:20px;background:#323232;border:1px solid #d4d4d4;"></div>
<div style="left:1321px;top:214px;width:16px;height:18px;background:#f2f2f2;"><svg width="16" height="18" viewBox="0 0 16 18" style="left:0;top:0"><rect x="0" y="0" width="16" height="18" fill="#f2f2f2"/><rect x="1" y="1" width="1" height="16" fill="#b4b4b4"/><rect x="14" y="1" width="1" height="16" fill="#b4b4b4"/><rect x="1" y="8.5" width="14" height="1" fill="#bcbcbc"/><rect x="1" y="16" width="14" height="1" fill="#c4c4c4"/><path d="M4.9 6 L7.5 3 L10.1 6 Z" fill="#000"/><path d="M4.9 11 L7.5 14 L10.1 11 Z" fill="#000"/></svg></div>
<div style="left:1217px;top:243px;width:121px;height:21px;background:#464646;"></div>
<svg width="8" height="4" viewBox="0 0 8 4" style="left:1325.5px;top:251px"><path d="M0.3 0.2 H7.3 L3.8 3.7 Z" fill="#a6a6a6"/></svg>
<svg width="13" height="9" viewBox="0 0 13 9" style="left:1143px;top:278px"><path d="M0 0 H13 L6.5 9 Z" fill="#8c8c8c"/></svg>
<div style="left:1134px;top:291px;width:456px;height:131px;background:#323232;"></div>
<div style="left:1217px;top:308px;width:121px;height:21px;background:#464646;"></div>
<svg width="8" height="4" viewBox="0 0 8 4" style="left:1325.5px;top:316px"><path d="M0.3 0.2 H7.3 L3.8 3.7 Z" fill="#a6a6a6"/></svg>
<div style="left:1445px;top:308px;width:121px;height:21px;background:#464646;"></div>
<svg width="8" height="4" viewBox="0 0 8 4" style="left:1553.5px;top:316px"><path d="M0.3 0.2 H7.3 L3.8 3.7 Z" fill="#a6a6a6"/></svg>
<div style="left:1214px;top:342px;width:14px;height:13px;background:#ff0000;"></div>
<div style="left:1234px;top:337px;width:105px;height:20px;background:#323232;border:1px solid #d4d4d4;"></div>
<div style="left:1322px;top:338px;width:16px;height:18px;background:#f2f2f2;"><svg width="16" height="18" viewBox="0 0 16 18" style="left:0;top:0"><rect x="0" y="0" width="16" height="18" fill="#f2f2f2"/><rect x="1" y="1" width="1" height="16" fill="#b4b4b4"/><rect x="14" y="1" width="1" height="16" fill="#b4b4b4"/><rect x="1" y="8.5" width="14" height="1" fill="#bcbcbc"/><rect x="1" y="16" width="14" height="1" fill="#c4c4c4"/><path d="M4.9 6 L7.5 3 L10.1 6 Z" fill="#000"/><path d="M4.9 11 L7.5 14 L10.1 11 Z" fill="#000"/></svg></div>
<div style="left:1345px;top:342px;width:14px;height:13px;background:#00c000;"></div>
<div style="left:1365px;top:337px;width:104px;height:20px;background:#323232;border:1px solid #d4d4d4;"></div>
<div style="left:1452px;top:338px;width:16px;height:18px;background:#f2f2f2;"><svg width="16" height="18" viewBox="0 0 16 18" style="left:0;top:0"><rect x="0" y="0" width="16" height="18" fill="#f2f2f2"/><rect x="1" y="1" width="1" height="16" fill="#b4b4b4"/><rect x="14" y="1" width="1" height="16" fill="#b4b4b4"/><rect x="1" y="8.5" width="14" height="1" fill="#bcbcbc"/><rect x="1" y="16" width="14" height="1" fill="#c4c4c4"/><path d="M4.9 6 L7.5 3 L10.1 6 Z" fill="#000"/><path d="M4.9 11 L7.5 14 L10.1 11 Z" fill="#000"/></svg></div>
<div style="left:1476px;top:342px;width:14px;height:13px;background:#0000ff;"></div>
<div style="left:1496px;top:337px;width:94px;height:20px;background:#323232;border:1px solid #d4d4d4;border-right:none;"></div>
<div style="left:1214px;top:368px;width:14px;height:13px;background:#ff0000;"></div>
<div style="left:1234px;top:363px;width:105px;height:20px;background:#323232;border:1px solid #d4d4d4;"></div>
<div style="left:1322px;top:364px;width:16px;height:18px;background:#f2f2f2;"><svg width="16" height="18" viewBox="0 0 16 18" style="left:0;top:0"><rect x="0" y="0" width="16" height="18" fill="#f2f2f2"/><rect x="1" y="1" width="1" height="16" fill="#b4b4b4"/><rect x="14" y="1" width="1" height="16" fill="#b4b4b4"/><rect x="1" y="8.5" width="14" height="1" fill="#bcbcbc"/><rect x="1" y="16" width="14" height="1" fill="#c4c4c4"/><path d="M4.9 6 L7.5 3 L10.1 6 Z" fill="#000"/><path d="M4.9 11 L7.5 14 L10.1 11 Z" fill="#000"/></svg></div>
<div style="left:1345px;top:368px;width:14px;height:13px;background:#00c000;"></div>
<div style="left:1365px;top:363px;width:104px;height:20px;background:#323232;border:1px solid #d4d4d4;"></div>
<div style="left:1452px;top:364px;width:16px;height:18px;background:#f2f2f2;"><svg width="16" height="18" viewBox="0 0 16 18" style="left:0;top:0"><rect x="0" y="0" width="16" height="18" fill="#f2f2f2"/><rect x="1" y="1" width="1" height="16" fill="#b4b4b4"/><rect x="14" y="1" width="1" height="16" fill="#b4b4b4"/><rect x="1" y="8.5" width="14" height="1" fill="#bcbcbc"/><rect x="1" y="16" width="14" height="1" fill="#c4c4c4"/><path d="M4.9 6 L7.5 3 L10.1 6 Z" fill="#000"/><path d="M4.9 11 L7.5 14 L10.1 11 Z" fill="#000"/></svg></div>
<div style="left:1476px;top:368px;width:14px;height:13px;background:#0000ff;"></div>
<div style="left:1496px;top:363px;width:94px;height:20px;background:#323232;border:1px solid #d4d4d4;border-right:none;"></div>
<div style="left:1214px;top:394px;width:14px;height:13px;background:#ff0000;"></div>
<div style="left:1234px;top:389px;width:105px;height:20px;background:#323232;border:1px solid #d4d4d4;"></div>
<div style="left:1322px;top:390px;width:16px;height:18px;background:#f2f2f2;"><svg width="16" height="18" viewBox="0 0 16 18" style="left:0;top:0"><rect x="0" y="0" width="16" height="18" fill="#f2f2f2"/><rect x="1" y="1" width="1" height="16" fill="#b4b4b4"/><rect x="14" y="1" width="1" height="16" fill="#b4b4b4"/><rect x="1" y="8.5" width="14" height="1" fill="#bcbcbc"/><rect x="1" y="16" width="14" height="1" fill="#c4c4c4"/><path d="M4.9 6 L7.5 3 L10.1 6 Z" fill="#000"/><path d="M4.9 11 L7.5 14 L10.1 11 Z" fill="#000"/></svg></div>
<div style="left:1345px;top:394px;width:14px;height:13px;background:#00c000;"></div>
<div style="left:1365px;top:389px;width:104px;height:20px;background:#323232;border:1px solid #d4d4d4;"></div>
<div style="left:1452px;top:390px;width:16px;height:18px;background:#f2f2f2;"><svg width="16" height="18" viewBox="0 0 16 18" style="left:0;top:0"><rect x="0" y="0" width="16" height="18" fill="#f2f2f2"/><rect x="1" y="1" width="1" height="16" fill="#b4b4b4"/><rect x="14" y="1" width="1" height="16" fill="#b4b4b4"/><rect x="1" y="8.5" width="14" height="1" fill="#bcbcbc"/><rect x="1" y="16" width="14" height="1" fill="#c4c4c4"/><path d="M4.9 6 L7.5 3 L10.1 6 Z" fill="#000"/><path d="M4.9 11 L7.5 14 L10.1 11 Z" fill="#000"/></svg></div>
<div style="left:1476px;top:394px;width:14px;height:13px;background:#0000ff;"></div>
<div style="left:1496px;top:389px;width:94px;height:20px;background:#323232;border:1px solid #d4d4d4;border-right:none;"></div>
<svg width="13" height="9" viewBox="0 0 13 9" style="left:1143px;top:429.5px"><path d="M0 0 H13 L6.5 9 Z" fill="#8c8c8c"/></svg>
<div style="left:1134px;top:442px;width:456px;height:39px;background:#323232;"></div>
<div style="left:1217px;top:452px;width:227px;height:21px;background:#464646;"></div>
<svg width="8" height="4" viewBox="0 0 8 4" style="left:1431.5px;top:460px"><path d="M0.3 0.2 H7.3 L3.8 3.7 Z" fill="#a6a6a6"/></svg>
<div style="left:1492px;top:453px;width:86px;height:20px;background:#323232;border:1px solid #d4d4d4;"></div>
<div style="left:1561px;top:454px;width:16px;height:18px;background:#f2f2f2;"><svg width="16" height="18" viewBox="0 0 16 18" style="left:0;top:0"><rect x="0" y="0" width="16" height="18" fill="#f2f2f2"/><rect x="1" y="1" width="1" height="16" fill="#b4b4b4"/><rect x="14" y="1" width="1" height="16" fill="#b4b4b4"/><rect x="1" y="8.5" width="14" height="1" fill="#bcbcbc"/><rect x="1" y="16" width="14" height="1" fill="#c4c4c4"/><path d="M4.9 6 L7.5 3 L10.1 6 Z" fill="#000"/><path d="M4.9 11 L7.5 14 L10.1 11 Z" fill="#000"/></svg></div>
<svg width="13" height="9" viewBox="0 0 13 9" style="left:1143px;top:488.5px"><path d="M0 0 H13 L6.5 9 Z" fill="#8c8c8c"/></svg>
<div style="left:1134px;top:501px;width:456px;height:75px;background:#323232;"></div>
<div style="left:1217px;top:510px;width:227px;height:21px;background:#464646;"></div>
<svg width="8" height="4" viewBox="0 0 8 4" style="left:1431.5px;top:518px"><path d="M0.3 0.2 H7.3 L3.8 3.7 Z" fill="#a6a6a6"/></svg>
<div style="left:1492px;top:513px;width:86px;height:20px;background:#323232;border:1px solid #d4d4d4;"></div>
<div style="left:1561px;top:514px;width:16px;height:18px;background:#f2f2f2;"><svg width="16" height="18" viewBox="0 0 16 18" style="left:0;top:0"><rect x="0" y="0" width="16" height="18" fill="#f2f2f2"/><rect x="1" y="1" width="1" height="16" fill="#b4b4b4"/><rect x="14" y="1" width="1" height="16" fill="#b4b4b4"/><rect x="1" y="8.5" width="14" height="1" fill="#bcbcbc"/><rect x="1" y="16" width="14" height="1" fill="#c4c4c4"/><path d="M4.9 6 L7.5 3 L10.1 6 Z" fill="#000"/><path d="M4.9 11 L7.5 14 L10.1 11 Z" fill="#000"/></svg></div>
<div style="left:1217px;top:537px;width:64px;height:23px;background:#323232;border:1px solid #f0f0f0;"></div>
<svg width="13" height="9" viewBox="0 0 13 9" style="left:1143.5px;top:582.5px"><path d="M0 0 L13 4.5 L0 9 Z" fill="#8c8c8c"/></svg>
<svg width="13" height="9" viewBox="0 0 13 9" style="left:1143.5px;top:602.5px"><path d="M0 0 L13 4.5 L0 9 Z" fill="#8c8c8c"/></svg>
<svg width="13" height="9" viewBox="0 0 13 9" style="left:1143.5px;top:622.5px"><path d="M0 0 L13 4.5 L0 9 Z" fill="#8c8c8c"/></svg>
<span class="t" style="left:1144.20px;top:131.19px;font-size:11px;color:#fff;letter-spacing:-0.155px;">Shape Data</span>
<span class="t" style="left:1173.20px;top:156.19px;font-size:11px;color:#fff;letter-spacing:-0.235px;">Shape Info</span>
<span class="t" style="left:1145.00px;top:185.19px;font-size:11px;color:#fff;letter-spacing:-0.475px;">Name:</span>
<span class="t" style="left:1218.60px;top:185.19px;font-size:11px;color:#fff;letter-spacing:-0.178px;">link_root__ear</span>
<span class="t" style="left:1453.20px;top:187.19px;font-size:11px;color:#fff;letter-spacing:-0.293px;">Index:</span>
<span class="t" style="left:1493.60px;top:186.79px;font-size:11px;color:#fff;letter-spacing:-0.190px;">0</span>
<span class="t" style="left:1144.20px;top:214.19px;font-size:11px;color:#fff;letter-spacing:-0.256px;">Skin Count:</span>
<span class="t" style="left:1218.60px;top:213.79px;font-size:11px;color:#fff;letter-spacing:-0.190px;">2</span>
<span class="t" style="left:1145.20px;top:245.19px;font-size:11px;color:#fff;letter-spacing:-0.318px;">Display LOD:</span>
<span class="t" style="left:1219.80px;top:244.69px;font-size:11px;color:#fff;letter-spacing:-0.354px;">mesh 0</span>
<span class="t" style="left:1173.50px;top:273.19px;font-size:11px;color:#fff;letter-spacing:-0.489px;">Transform</span>
<span class="t" style="left:1157.30px;top:310.19px;font-size:11px;color:#fff;letter-spacing:-0.228px;">Rotation:</span>
<span class="t" style="left:1219.80px;top:309.69px;font-size:11px;color:#fff;letter-spacing:-0.345px;">Euler</span>
<span class="t" style="left:1365.20px;top:310.19px;font-size:11px;color:#fff;letter-spacing:-0.365px;">Measure:</span>
<span class="t" style="left:1447.80px;top:309.69px;font-size:11px;color:#fff;letter-spacing:-0.363px;">Degrees</span>
<span class="t" style="left:1156.30px;top:338.19px;font-size:11px;color:#fff;letter-spacing:-0.348px;">Position</span>
<span class="t" style="left:1216.60px;top:341.34px;font-size:12px;color:#fff;">X</span>
<span class="t" style="left:1235.60px;top:337.79px;font-size:11px;color:#fff;letter-spacing:-0.190px;">5.76443</span>
<span class="t" style="left:1347.60px;top:341.34px;font-size:12px;color:#fff;">Y</span>
<span class="t" style="left:1366.60px;top:337.79px;font-size:11px;color:#fff;letter-spacing:-0.190px;">0.02477</span>
<span class="t" style="left:1479.00px;top:341.34px;font-size:12px;color:#fff;">Z</span>
<span class="t" style="left:1497.60px;top:337.79px;font-size:11px;color:#fff;letter-spacing:-0.190px;">0.00024</span>
<span class="t" style="left:1156.30px;top:364.19px;font-size:11px;color:#fff;letter-spacing:-0.228px;">Rotation:</span>
<span class="t" style="left:1216.60px;top:367.34px;font-size:12px;color:#fff;">X</span>
<span class="t" style="left:1235.60px;top:363.79px;font-size:11px;color:#fff;letter-spacing:-0.190px;">0.00000</span>
<span class="t" style="left:1347.60px;top:367.34px;font-size:12px;color:#fff;">Y</span>
<span class="t" style="left:1366.60px;top:363.79px;font-size:11px;color:#fff;letter-spacing:-0.190px;">0.00000</span>
<span class="t" style="left:1479.00px;top:367.34px;font-size:12px;color:#fff;">Z</span>
<span class="t" style="left:1497.60px;top:363.79px;font-size:11px;color:#fff;letter-spacing:-0.190px;">0.00000</span>
<span class="t" style="left:1156.30px;top:390.19px;font-size:11px;color:#fff;letter-spacing:-0.374px;">Scale:</span>
<span class="t" style="left:1216.60px;top:393.34px;font-size:12px;color:#fff;">X</span>
<span class="t" style="left:1235.60px;top:389.79px;font-size:11px;color:#fff;letter-spacing:-0.190px;">1.00000</span>
<span class="t" style="left:1347.60px;top:393.34px;font-size:12px;color:#fff;">Y</span>
<span class="t" style="left:1366.60px;top:389.79px;font-size:11px;color:#fff;letter-spacing:-0.190px;">1.00000</span>
<span class="t" style="left:1479.00px;top:393.34px;font-size:12px;color:#fff;">Z</span>
<span class="t" style="left:1497.60px;top:389.79px;font-size:11px;color:#fff;letter-spacing:-0.190px;">1.00000</span>
<span class="t" style="left:1173.20px;top:424.19px;font-size:11px;color:#fff;letter-spacing:-0.321px;">Material Information</span>
<span class="t" style="left:1154.50px;top:454.19px;font-size:11px;color:#fff;letter-spacing:-0.475px;">Name:</span>
<span class="t" style="left:1219.80px;top:453.69px;font-size:11px;color:#fff;letter-spacing:-0.349px;">ear</span>
<span class="t" style="left:1453.20px;top:454.19px;font-size:11px;color:#fff;letter-spacing:-0.293px;">Index:</span>
<span class="t" style="left:1493.60px;top:453.79px;font-size:11px;color:#fff;letter-spacing:-0.190px;">0</span>
<span class="t" style="left:1173.20px;top:483.19px;font-size:11px;color:#fff;letter-spacing:-0.345px;">Bone Information</span>
<span class="t" style="left:1144.50px;top:509.19px;font-size:11px;color:#fff;letter-spacing:-0.475px;">Name:</span>
<span class="t" style="left:1219.80px;top:511.69px;font-size:11px;color:#fff;letter-spacing:-0.285px;">link_root</span>
<span class="t" style="left:1453.20px;top:514.19px;font-size:11px;color:#fff;letter-spacing:-0.293px;">Index:</span>
<span class="t" style="left:1493.60px;top:513.79px;font-size:11px;color:#fff;letter-spacing:-0.190px;">0</span>
<span class="t" style="left:1145.00px;top:541.19px;font-size:11px;color:#fff;letter-spacing:-0.213px;">Bone List:</span>
<span class="t" style="left:1173.00px;top:578.19px;font-size:11px;color:#fff;letter-spacing:-0.224px;">Vertex Buffer</span>
<span class="t" style="left:1173.00px;top:598.19px;font-size:11px;color:#fff;letter-spacing:-0.225px;">Level Of Detail</span>
<span class="t" style="left:1173.00px;top:618.19px;font-size:11px;color:#fff;letter-spacing:-0.346px;">Key Shapes</span>
</div>
</div>
</body></html>
